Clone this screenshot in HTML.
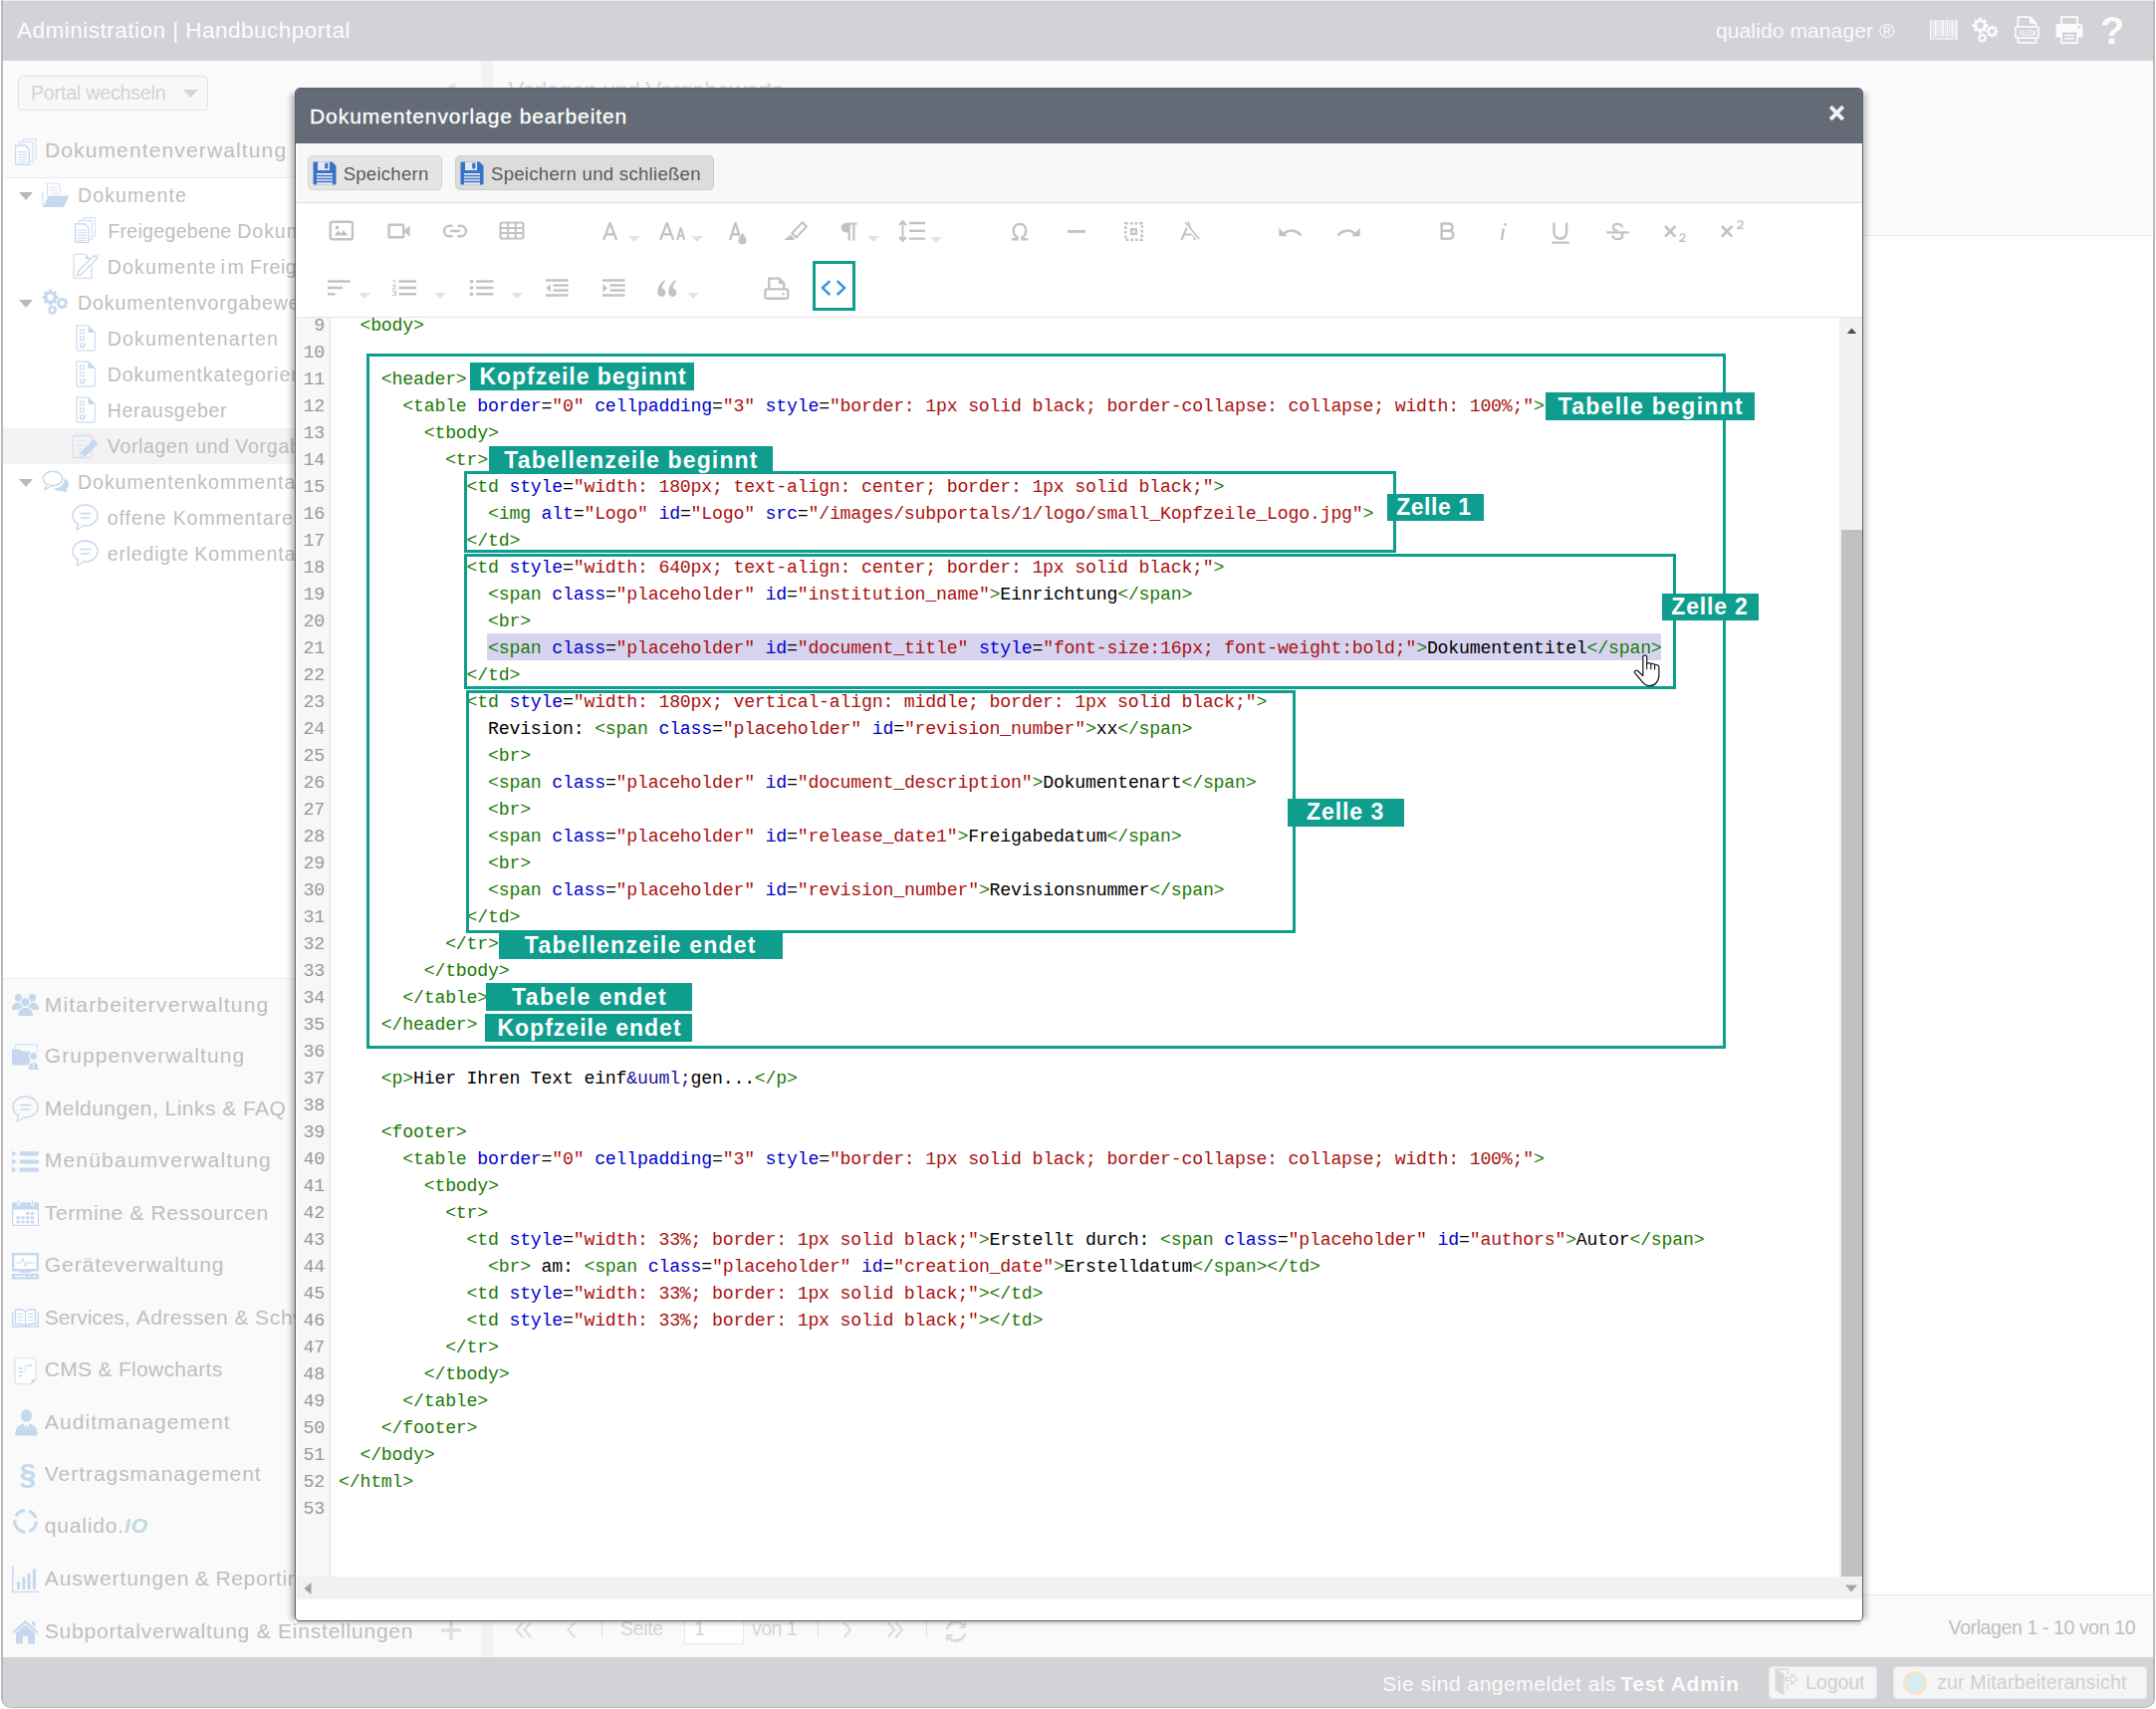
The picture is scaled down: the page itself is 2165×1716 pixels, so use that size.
<!DOCTYPE html>
<html lang="de"><head><meta charset="utf-8"><title>Dokumentenvorlage bearbeiten</title>
<style>
html,body{margin:0;padding:0;}
body{width:2165px;height:1716px;position:relative;overflow:hidden;background:#fff;font-family:'Liberation Sans', sans-serif;}
div,svg{box-sizing:border-box;}
.cm{font-family:'Liberation Mono', monospace;white-space:pre;position:absolute;}
.t{color:#1c7a08} .a{color:#0000cc} .s{color:#aa1111} .e{color:#221199} .k{color:#000}
</style></head><body>
<div style="position:absolute;left:1px;top:0px;width:2163px;height:1715px;border:2px solid #b9b9bb;border-top:1px solid #ececee;border-radius:0 0 10px 10px;background:#fff;overflow:hidden"></div>
<div style="position:absolute;left:3px;top:1px;width:2159px;height:59.5px;background:#d2d3d7"></div>
<div style="position:absolute;left:3px;top:60.5px;width:480px;height:1604px;background:#fff"></div>
<div style="position:absolute;left:3px;top:60.5px;width:480px;height:118px;background:#fafafa"></div>
<div style="position:absolute;left:3px;top:178px;width:480px;height:1px;background:#ececec"></div>
<div style="position:absolute;left:3px;top:430px;width:480px;height:36px;background:#f3f3f3"></div>
<div style="position:absolute;left:3px;top:982px;width:480px;height:683px;background:#fafafa"></div>
<div style="position:absolute;left:3px;top:982px;width:480px;height:1px;background:#ededed"></div>
<div style="position:absolute;left:483px;top:60.5px;width:12px;height:1604px;background:#f3f3f3"></div>
<div style="position:absolute;left:495px;top:60.5px;width:1667px;height:176px;background:#fafafa"></div>
<div style="position:absolute;left:495px;top:236px;width:1667px;height:1px;background:#ececec"></div>
<div style="position:absolute;left:495px;top:237px;width:1667px;height:1365px;background:#fff"></div>
<div style="position:absolute;left:495px;top:1601px;width:1667px;height:1px;background:#e6e6e6"></div>
<div style="position:absolute;left:495px;top:1602px;width:1667px;height:62.5px;background:#fafafa"></div>
<div style="position:absolute;left:3px;top:1664px;width:2159px;height:50px;background:#d2d3d7;border-radius:0 0 8px 8px"></div>
<div style="position:absolute;left:18px;top:76px;width:191px;height:35px;border:1px solid #e2e2e2;border-radius:5px;background:#f8f8f8"></div>
<svg style="position:absolute;left:184px;top:90px;" width="15" height="8" viewBox="0 0 15 8"><path d="M0 0h15L7.5 8z" fill="#d4d4d4"/></svg>
<svg style="position:absolute;left:18.5px;top:193px;" width="14" height="8" viewBox="0 0 14 8"><path d="M0 0h14L7 8z" fill="#b9b9b9"/></svg>
<svg style="position:absolute;left:18.5px;top:301px;" width="14" height="8" viewBox="0 0 14 8"><path d="M0 0h14L7 8z" fill="#b9b9b9"/></svg>
<svg style="position:absolute;left:18.5px;top:481px;" width="14" height="8" viewBox="0 0 14 8"><path d="M0 0h14L7 8z" fill="#b9b9b9"/></svg>
<div style="position:absolute;left:687px;top:1615px;width:60px;height:36px;border:1px solid #e8e8e8;background:#fff"></div>
<div style="position:absolute;left:604px;top:1622px;width:1px;height:22px;background:#dedede"></div>
<div style="position:absolute;left:821px;top:1622px;width:1px;height:22px;background:#dedede"></div>
<div style="position:absolute;left:930px;top:1622px;width:1px;height:22px;background:#dedede"></div>
<div style="position:absolute;left:1776px;top:1672.5px;width:108.5px;height:33.5px;background:#f5f5f5;border:1px solid #e6e6e6;border-radius:4px"></div>
<div style="position:absolute;left:1901px;top:1672.5px;width:255px;height:33.5px;background:#f5f5f5;border:1px solid #e6e6e6;border-radius:4px"></div>
<svg style="position:absolute;left:15px;top:138.5px;" width="22.0" height="27.0" viewBox="0 0 22 27"><path d="M8.500 3.500V0.700H21.300V19.800H18.800" fill="none" stroke="#d6e3f3" stroke-width="1.200"/><path d="M4.500 6.500V3.700H17.800V23.200H15" fill="none" stroke="#d6e3f3" stroke-width="1.200"/><path d="M0.700 7.200H10.500L14.300 11V26.300H0.700z" fill="#fff" stroke="#c5d8ee" stroke-width="1.300"/><path d="M3.200 13.500H12M3.200 16.200H12M3.200 18.900H12M3.200 21.600H12M3.200 24.100H12" stroke="#c5d8ee" stroke-width="1"/></svg>
<svg style="position:absolute;left:75px;top:218px;" width="21.34" height="26.189999999999998" viewBox="0 0 22 27"><path d="M8.500 3.500V0.700H21.300V19.800H18.800" fill="none" stroke="#d6e3f3" stroke-width="1.200"/><path d="M4.500 6.500V3.700H17.800V23.200H15" fill="none" stroke="#d6e3f3" stroke-width="1.200"/><path d="M0.700 7.200H10.500L14.300 11V26.300H0.700z" fill="#fff" stroke="#c5d8ee" stroke-width="1.300"/><path d="M3.200 13.500H12M3.200 16.200H12M3.200 18.900H12M3.200 21.600H12M3.200 24.100H12" stroke="#c5d8ee" stroke-width="1"/></svg>
<svg style="position:absolute;left:41.5px;top:182.5px;" width="28" height="26" viewBox="0 0 28 26"><path d="M5.500 14V1H15L18.500 4.500V12" fill="#fff" stroke="#d6e3f3" stroke-width="1.200"/><path d="M8 5H15M8 8H16M8 11H16" stroke="#d6e3f3" stroke-width="1"/><path d="M1 9V24.500" stroke="#d6e3f3" stroke-width="1.400"/><path d="M1.200 25L6.500 13.500H27.300L22 25z" fill="#c5d8ee"/></svg>
<svg style="position:absolute;left:72.5px;top:254px;" width="27" height="27" viewBox="0 0 27 27"><path d="M14 1.200H1.200V25.500H19V13" fill="none" stroke="#d6e3f3" stroke-width="1.500" stroke-linejoin="round"/><path d="M13 1.200v5h5z" fill="#c5d8ee"/><path d="M5.500 18.500L21.500 2.500 24.500 5.500 8.500 21.500 4.500 22.500z" fill="#fff" stroke="#c5d8ee" stroke-width="1.300"/><circle cx="24.500" cy="3" r="1.500" fill="none" stroke="#d6e3f3" stroke-width="1"/></svg>
<svg style="position:absolute;left:41.5px;top:289.5px;" width="28" height="27" viewBox="0 0 28 27"><g transform="translate(8.500,8.500) scale(0.950)"><circle cx="0" cy="0" r="5" fill="none" stroke="#c5d8ee" stroke-width="3.400"/><rect x="-1.500" y="-8.300" width="3" height="3" fill="#c5d8ee" transform="rotate(0)"/><rect x="-1.500" y="-8.300" width="3" height="3" fill="#c5d8ee" transform="rotate(45)"/><rect x="-1.500" y="-8.300" width="3" height="3" fill="#c5d8ee" transform="rotate(90)"/><rect x="-1.500" y="-8.300" width="3" height="3" fill="#c5d8ee" transform="rotate(135)"/><rect x="-1.500" y="-8.300" width="3" height="3" fill="#c5d8ee" transform="rotate(180)"/><rect x="-1.500" y="-8.300" width="3" height="3" fill="#c5d8ee" transform="rotate(225)"/><rect x="-1.500" y="-8.300" width="3" height="3" fill="#c5d8ee" transform="rotate(270)"/><rect x="-1.500" y="-8.300" width="3" height="3" fill="#c5d8ee" transform="rotate(315)"/></g><g transform="translate(20.500,14.500) scale(0.720)"><circle cx="0" cy="0" r="5" fill="none" stroke="#c5d8ee" stroke-width="3.400"/><rect x="-1.500" y="-8.300" width="3" height="3" fill="#c5d8ee" transform="rotate(0)"/><rect x="-1.500" y="-8.300" width="3" height="3" fill="#c5d8ee" transform="rotate(45)"/><rect x="-1.500" y="-8.300" width="3" height="3" fill="#c5d8ee" transform="rotate(90)"/><rect x="-1.500" y="-8.300" width="3" height="3" fill="#c5d8ee" transform="rotate(135)"/><rect x="-1.500" y="-8.300" width="3" height="3" fill="#c5d8ee" transform="rotate(180)"/><rect x="-1.500" y="-8.300" width="3" height="3" fill="#c5d8ee" transform="rotate(225)"/><rect x="-1.500" y="-8.300" width="3" height="3" fill="#c5d8ee" transform="rotate(270)"/><rect x="-1.500" y="-8.300" width="3" height="3" fill="#c5d8ee" transform="rotate(315)"/></g><g transform="translate(10.500,21.200) scale(0.580)"><circle cx="0" cy="0" r="5" fill="none" stroke="#c5d8ee" stroke-width="3.400"/><rect x="-1.500" y="-8.300" width="3" height="3" fill="#c5d8ee" transform="rotate(0)"/><rect x="-1.500" y="-8.300" width="3" height="3" fill="#c5d8ee" transform="rotate(45)"/><rect x="-1.500" y="-8.300" width="3" height="3" fill="#c5d8ee" transform="rotate(90)"/><rect x="-1.500" y="-8.300" width="3" height="3" fill="#c5d8ee" transform="rotate(135)"/><rect x="-1.500" y="-8.300" width="3" height="3" fill="#c5d8ee" transform="rotate(180)"/><rect x="-1.500" y="-8.300" width="3" height="3" fill="#c5d8ee" transform="rotate(225)"/><rect x="-1.500" y="-8.300" width="3" height="3" fill="#c5d8ee" transform="rotate(270)"/><rect x="-1.500" y="-8.300" width="3" height="3" fill="#c5d8ee" transform="rotate(315)"/></g></svg>
<svg style="position:absolute;left:75.5px;top:325.5px;" width="21" height="27" viewBox="0 0 21 27"><path d="M1 1H12.500L19.500 8V24.500Q19.500 26 18 26H2.500Q1 26 1 24.500z" fill="none" stroke="#d6e3f3" stroke-width="1.500"/><path d="M12.500 1V8H19.500z" fill="#c5d8ee"/><rect x="4.500" y="5" width="3.800" height="3.800" fill="none" stroke="#c5d8ee" stroke-width="1"/><rect x="4.500" y="12" width="3.800" height="3.800" fill="none" stroke="#c5d8ee" stroke-width="1"/><rect x="4.500" y="19" width="3.800" height="3.800" fill="none" stroke="#c5d8ee" stroke-width="1"/><path d="M5.500 21l1.500 1.500 4-3.500" fill="none" stroke="#c5d8ee" stroke-width="1"/></svg>
<svg style="position:absolute;left:75.5px;top:361.5px;" width="21" height="27" viewBox="0 0 21 27"><path d="M1 1H12.500L19.500 8V24.500Q19.500 26 18 26H2.500Q1 26 1 24.500z" fill="none" stroke="#d6e3f3" stroke-width="1.500"/><path d="M12.500 1V8H19.500z" fill="#c5d8ee"/><rect x="4.500" y="5" width="3.800" height="3.800" fill="none" stroke="#c5d8ee" stroke-width="1"/><rect x="4.500" y="12" width="3.800" height="3.800" fill="none" stroke="#c5d8ee" stroke-width="1"/><rect x="4.500" y="19" width="3.800" height="3.800" fill="none" stroke="#c5d8ee" stroke-width="1"/><path d="M5.500 21l1.500 1.500 4-3.500" fill="none" stroke="#c5d8ee" stroke-width="1"/></svg>
<svg style="position:absolute;left:75.5px;top:397.5px;" width="21" height="27" viewBox="0 0 21 27"><path d="M1 1H12.500L19.500 8V24.500Q19.500 26 18 26H2.500Q1 26 1 24.500z" fill="none" stroke="#d6e3f3" stroke-width="1.500"/><path d="M12.500 1V8H19.500z" fill="#c5d8ee"/><rect x="4.500" y="5" width="3.800" height="3.800" fill="none" stroke="#c5d8ee" stroke-width="1"/><rect x="4.500" y="12" width="3.800" height="3.800" fill="none" stroke="#c5d8ee" stroke-width="1"/><rect x="4.500" y="19" width="3.800" height="3.800" fill="none" stroke="#c5d8ee" stroke-width="1"/><path d="M5.500 21l1.500 1.500 4-3.500" fill="none" stroke="#c5d8ee" stroke-width="1"/></svg>
<svg style="position:absolute;left:72px;top:433px;" width="28" height="28" viewBox="0 0 28 28"><path d="M1 4.500H20V13M20 20V26.500H1V4.500" fill="none" stroke="#d6e3f3" stroke-width="1.400"/><path d="M5 1.500V6M9 1.500V6M13 1.500V6M17 1.500V6" stroke="#d6e3f3" stroke-width="1"/><path d="M4.500 10H16M4.500 14H14M4.500 18H11" stroke="#d6e3f3" stroke-width="1"/><path d="M8.500 21.500L22 8l4.500 4.500L13 26 7.500 27z" fill="#c5d8ee"/><path d="M9.500 22.500l2.500 2.500-3 .700z" fill="#fff"/></svg>
<svg style="position:absolute;left:42px;top:471.5px;" width="28" height="24" viewBox="0 0 28 24"><ellipse cx="11" cy="8.500" rx="9.800" ry="7.300" fill="#fff" stroke="#c5d8ee" stroke-width="1.500"/><path d="M5 14.500L3 19.500 10 15.800" fill="#fff" stroke="#c5d8ee" stroke-width="1.300"/><path d="M22.500 8.500c3 1.300 4.500 3.500 4.500 6 0 2-1 3.800-2.700 5l1.700 3.500-5-2c-3.500.5-7-.3-9-2.500 6 0 11-4 10.500-10z" fill="#c5d8ee"/></svg>
<svg style="position:absolute;left:72px;top:505.5px;" width="27" height="27" viewBox="0 0 27 27"><ellipse cx="13.500" cy="11.500" rx="12.500" ry="10.500" fill="none" stroke="#c5d8ee" stroke-width="1.400"/><path d="M6.500 20L5 26 12.500 21.800" fill="#fff" stroke="#c5d8ee" stroke-width="1.300" stroke-linejoin="round"/><path d="M8 9.500H19.500M9 14H18" stroke="#c5d8ee" stroke-width="1.500"/></svg>
<svg style="position:absolute;left:72px;top:541.5px;" width="27" height="27" viewBox="0 0 27 27"><ellipse cx="13.500" cy="11.500" rx="12.500" ry="10.500" fill="none" stroke="#c5d8ee" stroke-width="1.400"/><path d="M6.500 20L5 26 12.500 21.800" fill="#fff" stroke="#c5d8ee" stroke-width="1.300" stroke-linejoin="round"/><path d="M8 9.500H19.500M9 14H18" stroke="#c5d8ee" stroke-width="1.500"/></svg>
<svg style="position:absolute;left:12px;top:997px;" width="27" height="24" viewBox="0 0 27 24"><circle cx="6.500" cy="4.800" r="3.700" fill="#c5d8ee"/><circle cx="20.500" cy="4.800" r="3.700" fill="#c5d8ee"/><path d="M0 17C0 11.500 2.500 9.500 6.500 9.500S13 11.500 13 17z" fill="#c5d8ee"/><path d="M14 17C14 11.500 16.500 9.500 20.500 9.500S27 11.500 27 17z" fill="#c5d8ee"/><circle cx="13.500" cy="9.300" r="4.600" fill="#c5d8ee" stroke="#fafafa" stroke-width="1.200"/><path d="M5.500 23.500C5.500 17 8.500 14.500 13.500 14.500S21.500 17 21.500 23.500z" fill="#c5d8ee" stroke="#fafafa" stroke-width="1.200"/></svg>
<svg style="position:absolute;left:12px;top:1047.5px;" width="27" height="27" viewBox="0 0 27 27"><path d="M3.500 5V0.800H25.500V9" fill="none" stroke="#d6e3f3" stroke-width="1.200"/><path d="M0 5.500H8L10 7.500H18V21.500H0z" fill="#c5d8ee"/><circle cx="21.500" cy="12.500" r="4" fill="#c5d8ee" stroke="#fafafa" stroke-width="1.200"/><path d="M16 26.500C16 20.500 18 18.500 21.500 18.500S27 20.500 27 26.500z" fill="#c5d8ee" stroke="#fafafa" stroke-width="1.200"/><path d="M21.500 19.500V25" stroke="#fafafa" stroke-width="1"/></svg>
<svg style="position:absolute;left:12px;top:1099.5px;" width="27" height="27" viewBox="0 0 27 27"><ellipse cx="13.500" cy="11.500" rx="12.500" ry="10.500" fill="none" stroke="#c5d8ee" stroke-width="1.400"/><path d="M6.500 20L5 26 12.500 21.800" fill="#fff" stroke="#c5d8ee" stroke-width="1.300" stroke-linejoin="round"/><path d="M8 9.500H19.500M9 14H18" stroke="#c5d8ee" stroke-width="1.500"/></svg>
<svg style="position:absolute;left:12px;top:1155px;" width="27" height="23" viewBox="0 0 27 23"><path d="M0 0.500L5 3.500 0 6.500zM0 8.500L5 11.500 0 14.500zM0 16.500L5 19.500 0 22.500z" fill="#c5d8ee"/><rect x="7.500" y="1.200" width="19.500" height="4.200" rx="1.300" fill="#c5d8ee"/><rect x="7.500" y="9.400" width="19.500" height="4.200" rx="1.300" fill="#c5d8ee"/><rect x="7.500" y="17.600" width="19.500" height="4.200" rx="1.300" fill="#c5d8ee"/></svg>
<svg style="position:absolute;left:12px;top:1205px;" width="27" height="26" viewBox="0 0 27 26"><rect x="0.600" y="3" width="25.800" height="22.400" fill="#fff" stroke="#c5d8ee" stroke-width="1.200"/><rect x="0.600" y="3" width="25.800" height="6.500" fill="#c5d8ee"/><path d="M6.500 0.500V6M20.500 0.500V6" stroke="#fff" stroke-width="3"/><path d="M6.500 0.500V5.500M20.500 0.500V5.500" stroke="#c5d8ee" stroke-width="1.300"/><rect x="14.1" y="12.0" width="3.300" height="2.800" fill="#c5d8ee"/><rect x="18.9" y="12.0" width="3.300" height="2.800" fill="#c5d8ee"/><rect x="4.5" y="16.3" width="3.300" height="2.800" fill="#c5d8ee"/><rect x="9.3" y="16.3" width="3.300" height="2.800" fill="#c5d8ee"/><rect x="14.1" y="16.3" width="3.300" height="2.800" fill="#c5d8ee"/><rect x="18.9" y="16.3" width="3.300" height="2.800" fill="#c5d8ee"/><rect x="4.5" y="20.6" width="3.300" height="2.800" fill="#c5d8ee"/><rect x="9.3" y="20.6" width="3.300" height="2.800" fill="#c5d8ee"/><rect x="14.1" y="20.6" width="3.300" height="2.800" fill="#c5d8ee"/><rect x="18.9" y="20.6" width="3.300" height="2.800" fill="#c5d8ee"/></svg>
<svg style="position:absolute;left:12px;top:1258px;" width="27" height="27" viewBox="0 0 27 27"><rect x="1.200" y="1.200" width="24.600" height="16" fill="#fff" stroke="#c5d8ee" stroke-width="2.400"/><path d="M4 10H9L11 5.500 13.500 14 15.500 8.500 16.500 10H23" fill="none" stroke="#c5d8ee" stroke-width="1"/><rect x="8" y="18" width="11" height="2" fill="#c5d8ee"/><rect x="0" y="21" width="27" height="5.500" fill="#c5d8ee"/><path d="M3 23.700H14M17 23.700H19M21 23.700H24" stroke="#fff" stroke-width="1.200"/></svg>
<svg style="position:absolute;left:12px;top:1314px;" width="27" height="19" viewBox="0 0 27 19"><path d="M0.700 3V18H26.300V3" fill="none" stroke="#c5d8ee" stroke-width="1.300"/><path d="M3.500 1C7 .500 11 .800 13.500 2.800 16 .800 20 .500 23.500 1V15.500C20 15 16 15.300 13.500 17 11 15.300 7 15 3.500 15.500z" fill="#fff" stroke="#c5d8ee" stroke-width="1.300"/><path d="M13.500 2.800V17" stroke="#c5d8ee" stroke-width="1.300"/><path d="M6 5.500H11M6 8.500H11M6 11.500H11M16 5.500H21M16 8.500H21M16 11.500H21" stroke="#c5d8ee" stroke-width="1"/></svg>
<svg style="position:absolute;left:14px;top:1362.5px;" width="23" height="28" viewBox="0 0 23 28"><path d="M1 2.500Q1 1 2.500 1H20.500Q22 1 22 2.500V22L17.500 26.500H2.500Q1 26.500 1 25z" fill="#fff" stroke="#d6e3f3" stroke-width="1.200"/><path d="M22 22H17.500V26.500z" fill="#c5d8ee"/><path d="M4.500 11H9M4.500 14.500H9M4.500 18.500H9M14 8H18.500" stroke="#c5d8ee" stroke-width="1.500"/><path d="M9 14.500H11.500V8H14" fill="none" stroke="#d6e3f3" stroke-width="1"/></svg>
<svg style="position:absolute;left:14.5px;top:1414.5px;" width="23" height="27" viewBox="0 0 23 27"><ellipse cx="11.500" cy="6.500" rx="5.500" ry="6.200" fill="#c5d8ee"/><path d="M0.300 26.500C0.300 18.500 3 16 8.500 14.500L11.500 22 14.500 14.500C20 16 22.700 18.500 22.700 26.500z" fill="#c5d8ee"/><path d="M11.500 15.500l1.200 1.500-1.200 7-1.200-7z" fill="#c5d8ee"/></svg>
<svg style="position:absolute;left:12px;top:1514px;" width="27" height="27" viewBox="0 0 27 27"><circle cx="13.500" cy="13.500" r="10.800" fill="none" stroke="#c5d8ee" stroke-width="3.200" stroke-dasharray="13 4 18 4 11 4 10 3.860"/></svg>
<svg style="position:absolute;left:12px;top:1572px;" width="27" height="27" viewBox="0 0 27 27"><path d="M0.700 0V26.300H27" fill="none" stroke="#c5d8ee" stroke-width="1.300"/><path d="M0.700 4H2.500M0.700 9H2.500M0.700 14H2.500M0.700 19H2.500" stroke="#c5d8ee" stroke-width="1"/><rect x="5" y="16" width="3" height="8" rx="1" fill="#c5d8ee"/><rect x="10.300" y="11.500" width="3" height="12.500" rx="1" fill="#c5d8ee"/><rect x="15.600" y="7.500" width="3" height="16.500" rx="1" fill="#c5d8ee"/><rect x="20.900" y="3.500" width="3" height="20.500" rx="1" fill="#c5d8ee"/></svg>
<svg style="position:absolute;left:12px;top:1626px;" width="27" height="25" viewBox="0 0 27 25"><path d="M13.500 1L26.500 12.500 25 14 13.500 4 2 14 .500 12.500z" fill="#c5d8ee"/><path d="M20 2.500h3.500v5.500L20 5z" fill="#c5d8ee"/><path d="M4 13.500L13.500 5.500 23 13.500V24.500H16V17H11V24.500H4z" fill="#c5d8ee"/></svg>
<svg style="position:absolute;left:1937.5px;top:19.8px;" width="28" height="20.5" viewBox="0 0 28 20.5"><rect x="0" y="0" width="1.5" height="20.5" fill="#fbfbfc"/><rect x="2.6" y="0" width="1" height="20.5" fill="#fbfbfc"/><rect x="4.6" y="0" width="2" height="16.5" fill="#fbfbfc"/><rect x="7.6" y="0" width="1" height="16.5" fill="#fbfbfc"/><rect x="9.6" y="0" width="1" height="16.5" fill="#fbfbfc"/><rect x="11.6" y="0" width="2.2" height="16.5" fill="#fbfbfc"/><rect x="14.8" y="0" width="1" height="16.5" fill="#fbfbfc"/><rect x="16.8" y="0" width="1.6" height="16.5" fill="#fbfbfc"/><rect x="19.4" y="0" width="1" height="16.5" fill="#fbfbfc"/><rect x="21.4" y="0" width="2" height="16.5" fill="#fbfbfc"/><rect x="24.4" y="0" width="1" height="20.5" fill="#fbfbfc"/><rect x="26" y="0" width="1.5" height="20.5" fill="#fbfbfc"/><rect x="3.500" y="17.500" width="20.500" height="2.500" fill="#fbfbfc" opacity="0.600"/></svg>
<svg style="position:absolute;left:1979.5px;top:16.5px;" width="28" height="27" viewBox="0 0 28 27"><g transform="translate(8.500,8.500) scale(0.950)"><circle cx="0" cy="0" r="5" fill="none" stroke="#fbfbfc" stroke-width="3.400"/><rect x="-1.500" y="-8.300" width="3" height="3" fill="#fbfbfc" transform="rotate(0)"/><rect x="-1.500" y="-8.300" width="3" height="3" fill="#fbfbfc" transform="rotate(45)"/><rect x="-1.500" y="-8.300" width="3" height="3" fill="#fbfbfc" transform="rotate(90)"/><rect x="-1.500" y="-8.300" width="3" height="3" fill="#fbfbfc" transform="rotate(135)"/><rect x="-1.500" y="-8.300" width="3" height="3" fill="#fbfbfc" transform="rotate(180)"/><rect x="-1.500" y="-8.300" width="3" height="3" fill="#fbfbfc" transform="rotate(225)"/><rect x="-1.500" y="-8.300" width="3" height="3" fill="#fbfbfc" transform="rotate(270)"/><rect x="-1.500" y="-8.300" width="3" height="3" fill="#fbfbfc" transform="rotate(315)"/></g><g transform="translate(20.500,14.500) scale(0.720)"><circle cx="0" cy="0" r="5" fill="none" stroke="#fbfbfc" stroke-width="3.400"/><rect x="-1.500" y="-8.300" width="3" height="3" fill="#fbfbfc" transform="rotate(0)"/><rect x="-1.500" y="-8.300" width="3" height="3" fill="#fbfbfc" transform="rotate(45)"/><rect x="-1.500" y="-8.300" width="3" height="3" fill="#fbfbfc" transform="rotate(90)"/><rect x="-1.500" y="-8.300" width="3" height="3" fill="#fbfbfc" transform="rotate(135)"/><rect x="-1.500" y="-8.300" width="3" height="3" fill="#fbfbfc" transform="rotate(180)"/><rect x="-1.500" y="-8.300" width="3" height="3" fill="#fbfbfc" transform="rotate(225)"/><rect x="-1.500" y="-8.300" width="3" height="3" fill="#fbfbfc" transform="rotate(270)"/><rect x="-1.500" y="-8.300" width="3" height="3" fill="#fbfbfc" transform="rotate(315)"/></g><g transform="translate(10.500,21.200) scale(0.580)"><circle cx="0" cy="0" r="5" fill="none" stroke="#fbfbfc" stroke-width="3.400"/><rect x="-1.500" y="-8.300" width="3" height="3" fill="#fbfbfc" transform="rotate(0)"/><rect x="-1.500" y="-8.300" width="3" height="3" fill="#fbfbfc" transform="rotate(45)"/><rect x="-1.500" y="-8.300" width="3" height="3" fill="#fbfbfc" transform="rotate(90)"/><rect x="-1.500" y="-8.300" width="3" height="3" fill="#fbfbfc" transform="rotate(135)"/><rect x="-1.500" y="-8.300" width="3" height="3" fill="#fbfbfc" transform="rotate(180)"/><rect x="-1.500" y="-8.300" width="3" height="3" fill="#fbfbfc" transform="rotate(225)"/><rect x="-1.500" y="-8.300" width="3" height="3" fill="#fbfbfc" transform="rotate(270)"/><rect x="-1.500" y="-8.300" width="3" height="3" fill="#fbfbfc" transform="rotate(315)"/></g></svg>
<svg style="position:absolute;left:2023px;top:16.2px;" width="25" height="28" viewBox="0 0 25 28"><path d="M3.500 10V1.200H15.500L21.500 7.200V10M21.500 23V26.800H3.500V23" fill="none" stroke="#fbfbfc" stroke-width="1.800"/><path d="M15 1.200V7.700H21.500z" fill="#fbfbfc"/><rect x="0.900" y="10.900" width="23.200" height="11.200" rx="1.500" fill="none" stroke="#fbfbfc" stroke-width="1.800"/></svg>
<svg style="position:absolute;left:2064px;top:16.2px;" width="28" height="28" viewBox="0 0 28 28"><path d="M6 9V1.200H22V9" fill="none" stroke="#fbfbfc" stroke-width="1.800"/><path d="M2.500 8H25.500Q27.500 8 27.500 10V21.500H0.500V10Q0.500 8 2.500 8z" fill="#fbfbfc"/><circle cx="24" cy="11.300" r="1.300" fill="#d2d3d7"/><rect x="6" y="15.500" width="16" height="11.600" fill="#d2d3d7" stroke="#fbfbfc" stroke-width="1.800"/><path d="M9 19.500H19M9 22.800H19" stroke="#fbfbfc" stroke-width="1.600"/></svg>
<svg style="position:absolute;left:1782px;top:1674.5px;" width="24" height="28" viewBox="0 0 24 28"><path d="M0.500 1H13V6M13 16V22" fill="none" stroke="#d9d9db" stroke-width="1.400"/><path d="M0.500 1L9.500 5.500V27L0.500 22z" fill="#d9d9db"/><path d="M11 9.500H17V6L23 11 17 16V12.500H11z" fill="#f5f5f5" stroke="#d9d9db" stroke-width="1.400" stroke-linejoin="round"/></svg>
<svg style="position:absolute;left:1910px;top:1677px;" width="26" height="26" viewBox="0 0 26 26"><circle cx="13" cy="13" r="10.800" fill="#d6ecee" stroke="#fae2c6" stroke-width="2.600"/></svg>
<svg style="position:absolute;left:517px;top:1628px;" width="18" height="17" viewBox="0 0 18 17"><path d="M8 1L1.500 8.500 8 16" fill="none" stroke="#dcdcde" stroke-width="2"/><path d="M8 1L1.500 8.500 8 16" fill="none" stroke="#dcdcde" stroke-width="2" transform="translate(8,0)"/></svg>
<svg style="position:absolute;left:569px;top:1628px;" width="10" height="17" viewBox="0 0 10 17"><path d="M8 1L1.500 8.500 8 16" fill="none" stroke="#dcdcde" stroke-width="2"/></svg>
<svg style="position:absolute;left:846px;top:1628px;" width="10" height="17" viewBox="0 0 10 17"><path d="M1.500 1L8 8.500 1.500 16" fill="none" stroke="#dcdcde" stroke-width="2"/></svg>
<svg style="position:absolute;left:890px;top:1628px;" width="18" height="17" viewBox="0 0 18 17"><path d="M1.500 1L8 8.500 1.500 16" fill="none" stroke="#dcdcde" stroke-width="2"/><path d="M1.500 1L8 8.500 1.500 16" fill="none" stroke="#dcdcde" stroke-width="2" transform="translate(8,0)"/></svg>
<svg style="position:absolute;left:948px;top:1626px;" width="24" height="24" viewBox="0 0 24 24"><path d="M3 10A9.500 9.500 0 0 1 20 6.500M21 14A9.500 9.500 0 0 1 4 17.500" fill="none" stroke="#dcdcde" stroke-width="3"/><path d="M22 1.500V9H14.500zM2 22.500V15H9.500z" fill="#dcdcde"/></svg>
<svg style="position:absolute;left:442px;top:1625.5px;" width="22" height="22" viewBox="0 0 22 22"><path d="M11 1V21M1 11H21" stroke="#dedee0" stroke-width="3.600"/></svg>
<svg style="position:absolute;left:448px;top:82px;" width="10" height="12" viewBox="0 0 10 12"><path d="M9.500 0.500V11.500L0.500 6z" fill="#e4e4e4"/></svg>
<div style="position:absolute;left:17.00px;top:19.95px;font-size:22.5px;line-height:22.5px;height:29.2px;color:#fdfdfd;font-weight:400;font-style:normal;letter-spacing:0.491px;white-space:pre;">Administration | Handbuchportal</div>
<div style="position:absolute;left:1723.00px;top:20.22px;font-size:21px;line-height:21px;height:27.3px;color:#fafafa;font-weight:400;font-style:normal;letter-spacing:0.108px;white-space:pre;">qualido manager ®</div>
<div style="position:absolute;left:31.00px;top:84.49px;font-size:19.5px;line-height:19.5px;height:25.4px;color:#d2d2d4;font-weight:400;font-style:normal;letter-spacing:-0.154px;white-space:pre;">Portal wechseln</div>
<div style="position:absolute;left:44.90px;top:140.22px;font-size:21px;line-height:21px;height:27.3px;color:#bebec2;font-weight:400;font-style:normal;letter-spacing:1.136px;white-space:pre;">Dokumentenverwaltung</div>
<div style="position:absolute;left:44.80px;top:998.22px;font-size:21px;line-height:21px;height:27.3px;color:#bebec2;font-weight:400;font-style:normal;letter-spacing:1.182px;white-space:pre;">Mitarbeiterverwaltung</div>
<div style="position:absolute;left:44.80px;top:1049.22px;font-size:21px;line-height:21px;height:27.3px;color:#bebec2;font-weight:400;font-style:normal;letter-spacing:1.064px;white-space:pre;">Gruppenverwaltung</div>
<div style="position:absolute;left:44.80px;top:1102.22px;font-size:21px;line-height:21px;height:27.3px;color:#bebec2;font-weight:400;font-style:normal;letter-spacing:0.467px;white-space:pre;">Meldungen, Links &amp; FAQ</div>
<div style="position:absolute;left:44.80px;top:1154.22px;font-size:21px;line-height:21px;height:27.3px;color:#bebec2;font-weight:400;font-style:normal;letter-spacing:1.199px;white-space:pre;">Menübaumverwaltung</div>
<div style="position:absolute;left:44.80px;top:1207.22px;font-size:21px;line-height:21px;height:27.3px;color:#bebec2;font-weight:400;font-style:normal;letter-spacing:0.630px;white-space:pre;">Termine &amp; Ressourcen</div>
<div style="position:absolute;left:44.80px;top:1259.22px;font-size:21px;line-height:21px;height:27.3px;color:#bebec2;font-weight:400;font-style:normal;letter-spacing:0.929px;white-space:pre;">Geräteverwaltung</div>
<div style="position:absolute;left:44.80px;top:1312.22px;font-size:21px;line-height:21px;height:27.3px;color:#bebec2;font-weight:400;font-style:normal;letter-spacing:-0.082px;white-space:pre;">Services,</div>
<div style="position:absolute;left:136.70px;top:1312.22px;font-size:21px;line-height:21px;height:27.3px;color:#bebec2;font-weight:400;font-style:normal;letter-spacing:0.469px;white-space:pre;">Adressen</div>
<div style="position:absolute;left:235.60px;top:1312.22px;font-size:21px;line-height:21px;height:27.3px;color:#bebec2;font-weight:400;font-style:normal;letter-spacing:0.384px;white-space:pre;">&amp;</div>
<div style="position:absolute;left:256.10px;top:1312.22px;font-size:21px;line-height:21px;height:27.3px;color:#bebec2;font-weight:400;font-style:normal;letter-spacing:0.655px;white-space:pre;">Schwarzes Brett</div>
<div style="position:absolute;left:44.80px;top:1364.22px;font-size:21px;line-height:21px;height:27.3px;color:#bebec2;font-weight:400;font-style:normal;letter-spacing:0.302px;white-space:pre;">CMS &amp; Flowcharts</div>
<div style="position:absolute;left:44.80px;top:1417.22px;font-size:21px;line-height:21px;height:27.3px;color:#bebec2;font-weight:400;font-style:normal;letter-spacing:1.089px;white-space:pre;">Auditmanagement</div>
<div style="position:absolute;left:44.80px;top:1469.22px;font-size:21px;line-height:21px;height:27.3px;color:#bebec2;font-weight:400;font-style:normal;letter-spacing:0.947px;white-space:pre;">Vertragsmanagement</div>
<div style="position:absolute;left:44.80px;top:1521.22px;font-size:21px;line-height:21px;height:27.3px;color:#bebec2;font-weight:400;font-style:normal;letter-spacing:0.820px;white-space:pre;">qualido.</div>
<div style="position:absolute;left:44.80px;top:1574.22px;font-size:21px;line-height:21px;height:27.3px;color:#bebec2;font-weight:400;font-style:normal;letter-spacing:0.939px;white-space:pre;">Auswertungen</div>
<div style="position:absolute;left:195.70px;top:1574.22px;font-size:21px;line-height:21px;height:27.3px;color:#bebec2;font-weight:400;font-style:normal;letter-spacing:1.384px;white-space:pre;">&amp;</div>
<div style="position:absolute;left:216.40px;top:1574.22px;font-size:21px;line-height:21px;height:27.3px;color:#bebec2;font-weight:400;font-style:normal;letter-spacing:0.683px;white-space:pre;">Reporting</div>
<div style="position:absolute;left:44.80px;top:1627.22px;font-size:21px;line-height:21px;height:27.3px;color:#bebec2;font-weight:400;font-style:normal;letter-spacing:0.779px;white-space:pre;">Subportalverwaltung &amp; Einstellungen</div>
<div style="position:absolute;left:125.00px;top:1521.22px;font-size:21px;line-height:21px;height:27.3px;color:#bfdcdc;font-weight:700;font-style:italic;letter-spacing:1.028px;white-space:pre;">IO</div>
<div style="position:absolute;left:78.00px;top:187.49px;font-size:19.5px;line-height:19.5px;height:25.4px;color:#bebec2;font-weight:400;font-style:normal;letter-spacing:1.148px;white-space:pre;">Dokumente</div>
<div style="position:absolute;left:78.00px;top:295.49px;font-size:19.5px;line-height:19.5px;height:25.4px;color:#bebec2;font-weight:400;font-style:normal;letter-spacing:0.926px;white-space:pre;">Dokumentenvorgabewerte</div>
<div style="position:absolute;left:78.00px;top:475.49px;font-size:19.5px;line-height:19.5px;height:25.4px;color:#bebec2;font-weight:400;font-style:normal;letter-spacing:0.979px;white-space:pre;">Dokumentenkommentare</div>
<div style="position:absolute;left:107.80px;top:331.49px;font-size:19.5px;line-height:19.5px;height:25.4px;color:#bebec2;font-weight:400;font-style:normal;letter-spacing:1.149px;white-space:pre;">Dokumentenarten</div>
<div style="position:absolute;left:107.80px;top:367.49px;font-size:19.5px;line-height:19.5px;height:25.4px;color:#bebec2;font-weight:400;font-style:normal;letter-spacing:0.900px;white-space:pre;">Dokumentkategorien</div>
<div style="position:absolute;left:107.80px;top:403.49px;font-size:19.5px;line-height:19.5px;height:25.4px;color:#bebec2;font-weight:400;font-style:normal;letter-spacing:0.697px;white-space:pre;">Herausgeber</div>
<div style="position:absolute;left:107.80px;top:511.49px;font-size:19.5px;line-height:19.5px;height:25.4px;color:#bebec2;font-weight:400;font-style:normal;letter-spacing:0.942px;white-space:pre;">offene Kommentare</div>
<div style="position:absolute;left:108.20px;top:223.49px;font-size:19.5px;line-height:19.5px;height:25.4px;color:#bebec2;font-weight:400;font-style:normal;letter-spacing:0.332px;white-space:pre;">Freigegebene</div>
<div style="position:absolute;left:238.30px;top:223.49px;font-size:19.5px;line-height:19.5px;height:25.4px;color:#bebec2;font-weight:400;font-style:normal;letter-spacing:0.960px;white-space:pre;">Dokumente</div>
<div style="position:absolute;left:107.80px;top:259.49px;font-size:19.5px;line-height:19.5px;height:25.4px;color:#bebec2;font-weight:400;font-style:normal;letter-spacing:1.148px;white-space:pre;">Dokumente</div>
<div style="position:absolute;left:221.60px;top:259.49px;font-size:19.5px;line-height:19.5px;height:25.4px;color:#bebec2;font-weight:400;font-style:normal;letter-spacing:2.522px;white-space:pre;">im</div>
<div style="position:absolute;left:251.10px;top:259.49px;font-size:19.5px;line-height:19.5px;height:25.4px;color:#bebec2;font-weight:400;font-style:normal;letter-spacing:0.519px;white-space:pre;">Freigabeprozess</div>
<div style="position:absolute;left:107.80px;top:439.49px;font-size:19.5px;line-height:19.5px;height:25.4px;color:#bebec2;font-weight:400;font-style:normal;letter-spacing:0.660px;white-space:pre;">Vorlagen und</div>
<div style="position:absolute;left:236.30px;top:439.49px;font-size:19.5px;line-height:19.5px;height:25.4px;color:#bebec2;font-weight:400;font-style:normal;letter-spacing:0.766px;white-space:pre;">Vorgabewerte</div>
<div style="position:absolute;left:107.80px;top:547.49px;font-size:19.5px;line-height:19.5px;height:25.4px;color:#bebec2;font-weight:400;font-style:normal;letter-spacing:0.798px;white-space:pre;">erledigte</div>
<div style="position:absolute;left:195.30px;top:547.49px;font-size:19.5px;line-height:19.5px;height:25.4px;color:#bebec2;font-weight:400;font-style:normal;letter-spacing:0.992px;white-space:pre;">Kommentare</div>
<div style="position:absolute;left:510.30px;top:78.68px;font-size:24px;line-height:24px;height:31.2px;color:#d6d6d8;font-weight:400;font-style:normal;letter-spacing:-0.776px;white-space:pre;">Vorlagen und Vorgabewerte</div>
<div style="position:absolute;left:623.00px;top:1626.49px;font-size:19.5px;line-height:19.5px;height:25.4px;color:#d4d4d6;font-weight:400;font-style:normal;letter-spacing:-0.338px;white-space:pre;">Seite</div>
<div style="position:absolute;left:697.00px;top:1626.49px;font-size:19.5px;line-height:19.5px;height:25.4px;color:#d4d4d6;font-weight:400;font-style:normal;letter-spacing:0.000px;white-space:pre;">1</div>
<div style="position:absolute;left:755.00px;top:1626.49px;font-size:19.5px;line-height:19.5px;height:25.4px;color:#d4d4d6;font-weight:400;font-style:normal;letter-spacing:-0.551px;white-space:pre;">von 1</div>
<div style="position:absolute;left:1956.60px;top:1625.49px;font-size:19.5px;line-height:19.5px;height:25.4px;color:#bebec2;font-weight:400;font-style:normal;letter-spacing:-0.397px;white-space:pre;">Vorlagen 1 - 10 von 10</div>
<div style="position:absolute;left:1388.30px;top:1680.22px;font-size:21px;line-height:21px;height:27.3px;color:#fbfbfb;font-weight:400;font-style:normal;letter-spacing:0.514px;white-space:pre;">Sie sind angemeldet als</div>
<div style="position:absolute;left:1627.20px;top:1680.22px;font-size:21px;line-height:21px;height:27.3px;color:#fbfbfb;font-weight:700;font-style:normal;letter-spacing:0.754px;white-space:pre;">Test Admin</div>
<div style="position:absolute;left:1813.00px;top:1680.49px;font-size:19.5px;line-height:19.5px;height:25.4px;color:#cfcfd1;font-weight:400;font-style:normal;letter-spacing:-0.031px;white-space:pre;">Logout</div>
<div style="position:absolute;left:1945.00px;top:1680.49px;font-size:19.5px;line-height:19.5px;height:25.4px;color:#cfcfd1;font-weight:400;font-style:normal;letter-spacing:0.195px;white-space:pre;">zur Mitarbeiteransicht</div>
<div style="position:absolute;left:19.50px;top:1464.61px;font-size:30px;line-height:30px;height:39.0px;color:#c5d8ee;font-weight:700;font-style:normal;letter-spacing:0.000px;white-space:pre;">§</div>
<div style="position:absolute;left:2026.50px;top:29.38px;font-size:9px;line-height:9px;height:11.7px;color:#fbfbfc;font-weight:400;font-style:normal;letter-spacing:-1.339px;white-space:pre;">XLSX</div>
<div style="position:absolute;left:2109.00px;top:11.83px;font-size:38px;line-height:38px;height:49.4px;color:#fbfbfc;font-weight:700;font-style:normal;letter-spacing:0.000px;white-space:pre;transform:scaleX(1.05);transform-origin:left;">?</div>
<div style="position:absolute;left:287px;top:90px;width:9px;height:1540px;background:linear-gradient(to right,rgba(0,0,0,0),rgba(0,0,0,0.04) 30%,rgba(0,0,0,0.27));-webkit-mask-image:linear-gradient(to bottom,transparent,#000 8px,#000 1532px,transparent)"></div>
<div style="position:absolute;left:1871px;top:90px;width:9px;height:1540px;background:linear-gradient(to left,rgba(0,0,0,0),rgba(0,0,0,0.03) 30%,rgba(0,0,0,0.200));-webkit-mask-image:linear-gradient(to bottom,transparent,#000 8px,#000 1532px,transparent)"></div>
<div style="position:absolute;left:298px;top:1628px;width:1571px;height:5px;background:linear-gradient(to bottom,rgba(0,0,0,0.200),rgba(0,0,0,0))"></div>
<div style="position:absolute;left:296px;top:88px;width:1575px;height:1540px;background:#fff;border-radius:5px 5px 4px 4px;border:1px solid #5c626c;"></div>
<div style="position:absolute;left:297px;top:89px;width:1573px;height:54.5px;background:#646b76;border-radius:4px 4px 0 0"></div>
<svg style="position:absolute;left:1836px;top:105px;" width="17" height="17" viewBox="0 0 17 17"><path d="M2.2 2.2L14.8 14.8M14.8 2.2L2.2 14.8" stroke="#f1f1f2" stroke-width="4" fill="none"/></svg>
<div style="position:absolute;left:298px;top:143.5px;width:1572px;height:60px;background:#f8f8f8"></div>
<div style="position:absolute;left:298px;top:203px;width:1572px;height:1px;background:#dedede"></div>
<div style="position:absolute;left:309px;top:156px;width:135px;height:35px;background:#e5e5e5;border:1px solid #d6d6d6;border-radius:5px"></div>
<div style="position:absolute;left:457px;top:156px;width:260px;height:35px;background:#dcdcdc;border:1px solid #cdcdcd;border-radius:5px"></div>
<svg style="position:absolute;left:314px;top:161.5px;" width="24" height="24" viewBox="0 0 24 24"><path d="M0.5 1.5Q0.5 0.5 1.5 0.5H19.5L23.5 4.5V22.5Q23.5 23.5 22.5 23.5H1.5Q0.5 23.5 0.5 22.5Z" fill="#3a72c4"/><rect x="5" y="0.5" width="12" height="8.5" fill="#e4e8f2"/><rect x="12.2" y="1.8" width="3.2" height="5.6" fill="#3a72c4"/><rect x="4" y="12" width="16" height="11.5" fill="#e8ecf5"/><path d="M4 14.6h16M4 17.6h16M4 20.6h16" stroke="#3a72c4" stroke-width="1.5"/></svg>
<svg style="position:absolute;left:462px;top:161.5px;" width="24" height="24" viewBox="0 0 24 24"><path d="M0.5 1.5Q0.5 0.5 1.5 0.5H19.5L23.5 4.5V22.5Q23.5 23.5 22.5 23.5H1.5Q0.5 23.5 0.5 22.5Z" fill="#3a72c4"/><rect x="5" y="0.5" width="12" height="8.5" fill="#e4e8f2"/><rect x="12.2" y="1.8" width="3.2" height="5.6" fill="#3a72c4"/><rect x="4" y="12" width="16" height="11.5" fill="#e8ecf5"/><path d="M4 14.6h16M4 17.6h16M4 20.6h16" stroke="#3a72c4" stroke-width="1.5"/></svg>
<div style="position:absolute;left:298px;top:204px;width:1572px;height:114px;background:#fff"></div>
<div style="position:absolute;left:298px;top:318px;width:1572px;height:1px;background:#e4e4e4"></div>
<svg style="position:absolute;left:330px;top:220.9px;" width="26" height="21" viewBox="0 0 26 21"><rect x="1.7" y="1.7" width="22.3" height="17.6" rx="2" fill="none" stroke="#c3c3c3" stroke-width="2.4"/><circle cx="8.6" cy="7.4" r="1.9" fill="#c3c3c3"/><path d="M5.6 15.5l4-5 2.6 3 2.6-3.6 4.8 5.600z" fill="#c3c3c3"/></svg>
<svg style="position:absolute;left:388.5px;top:224px;" width="24" height="16" viewBox="0 0 24 16"><rect x="1.6" y="1.7" width="14.600" height="12.600" fill="none" stroke="#c3c3c3" stroke-width="2.4" rx="0.5"/><path d="M17 7l5.600-4.500v11l-5.600-4.500z" fill="#c3c3c3"/></svg>
<svg style="position:absolute;left:444px;top:225px;" width="26" height="14" viewBox="0 0 26 14"><path d="M10.500 1.800H7.200a5.200 5.200 0 0 0 0 10.400h3.300M15.500 1.800h3.300a5.200 5.200 0 0 1 0 10.400h-3.300M8 7h10" fill="none" stroke="#c3c3c3" stroke-width="2.400"/></svg>
<svg style="position:absolute;left:501px;top:222px;" width="26" height="19" viewBox="0 0 26 19"><rect x="1.500" y="1.500" width="23" height="16" rx="2" fill="none" stroke="#c3c3c3" stroke-width="2.200"/><path d="M1.500 7h23M1.500 12h23M9.200 1.500v16M16.800 1.500v16" stroke="#c3c3c3" stroke-width="2"/></svg>
<svg style="position:absolute;left:604.5px;top:223px;" width="15.2" height="18" viewBox="0 0 15.2 18"><path d="M1.100 18L7.6 0.800L14.1 18M3.34 12.24H11.86" fill="none" stroke="#c3c3c3" stroke-width="2.3" stroke-linejoin="miter"/></svg>
<svg style="position:absolute;left:631px;top:237px;" width="12" height="6" viewBox="0 0 12 6"><path d="M0 0h12L6 6z" fill="#e3e3e3"/></svg>
<svg style="position:absolute;left:662px;top:223px;" width="15.4" height="18" viewBox="0 0 15.4 18"><path d="M1.100 18L7.7 0.800L14.3 18M3.39 12.24H12.01" fill="none" stroke="#c3c3c3" stroke-width="2.3" stroke-linejoin="miter"/></svg>
<svg style="position:absolute;left:678.6px;top:228px;" width="9.4" height="13" viewBox="0 0 9.4 13"><path d="M1.100 13L4.7 0.800L8.3 13M2.07 8.84H7.33" fill="none" stroke="#c3c3c3" stroke-width="2" stroke-linejoin="miter"/></svg>
<svg style="position:absolute;left:694px;top:237px;" width="12" height="6" viewBox="0 0 12 6"><path d="M0 0h12L6 6z" fill="#e3e3e3"/></svg>
<svg style="position:absolute;left:732px;top:223px;" width="13" height="18" viewBox="0 0 13 18"><path d="M1.100 18L6.5 0.800L11.9 18M2.86 12.24H10.14" fill="none" stroke="#c3c3c3" stroke-width="2.3" stroke-linejoin="miter"/></svg>
<svg style="position:absolute;left:739.5px;top:232px;" width="11" height="15" viewBox="0 0 11 15"><path d="M5.500 1C7.500 4.500 10 6.500 10 9.500a4.500 4.500 0 0 1-9 0C1 6.500 3.500 4.500 5.500 1z" fill="#c3c3c3" stroke="#fff" stroke-width="1"/></svg>
<svg style="position:absolute;left:786.5px;top:222px;" width="24" height="20" viewBox="0 0 24 20"><path d="M18.700 1.300L22.800 5.400 12.600 16.400 8.300 12.200z" fill="none" stroke="#c3c3c3" stroke-width="2.200" stroke-linejoin="round"/><path d="M6.700 13.600l4.300 4.300-1 1H0.300z" fill="#c3c3c3"/></svg>
<svg style="position:absolute;left:844px;top:223px;" width="17" height="18.5" viewBox="0 0 17 18.5"><path d="M8 0.400H16.500V2.700H14.500V18.500H12.200V2.700H9.900V18.500H7.600V10.800C3.500 10.800 0.600 8.800 0.600 5.600 0.600 2.400 3.500 0.400 8 0.400z" fill="#c3c3c3"/></svg>
<svg style="position:absolute;left:871px;top:237px;" width="12" height="6" viewBox="0 0 12 6"><path d="M0 0h12L6 6z" fill="#e3e3e3"/></svg>
<svg style="position:absolute;left:901.5px;top:221px;" width="28" height="22" viewBox="0 0 28 22"><path d="M4.500 1v20M1 5l3.500-4 3.500 4M1 17l3.500 4 3.500-4" fill="none" stroke="#c3c3c3" stroke-width="2"/><path d="M11 3h16M11 10.800h16M11 18.600h16" stroke="#c3c3c3" stroke-width="2.400"/></svg>
<svg style="position:absolute;left:934px;top:237.5px;" width="12" height="6" viewBox="0 0 12 6"><path d="M0 0h12L6 6z" fill="#e3e3e3"/></svg>
<svg style="position:absolute;left:1015px;top:223px;" width="18" height="18.5" viewBox="0 0 18 18.5"><path d="M0.800 17.300H6.600V15.400C4 14 2.700 11.700 2.700 8.600 2.700 4.600 5.200 2 9 2s6.300 2.600 6.300 6.600c0 3.100-1.300 5.400-3.900 6.800v1.900h5.800" fill="none" stroke="#c3c3c3" stroke-width="2.400"/></svg>
<svg style="position:absolute;left:1072px;top:230.5px;" width="18" height="3" viewBox="0 0 18 3"><rect width="18" height="2.800" fill="#c3c3c3"/></svg>
<svg style="position:absolute;left:1128.5px;top:222.8px;" width="19" height="19" viewBox="0 0 19 19"><rect x="1.200" y="1.200" width="16.600" height="16.600" fill="none" stroke="#c3c3c3" stroke-width="2.600" stroke-dasharray="2.600 2.067"/><rect x="6" y="6" width="7" height="7" fill="#c3c3c3"/><rect x="8.200" y="8.200" width="2.600" height="2.600" fill="#fff"/></svg>
<svg style="position:absolute;left:1185px;top:222px;" width="20" height="20" viewBox="0 0 20 20"><path d="M1.500 19L8.500 2.500 15.500 19M4.500 13.500h8.500" fill="none" stroke="#c3c3c3" stroke-width="2.200"/><path d="M4.500 1.500L19 18.500" stroke="#fff" stroke-width="3.600"/><path d="M5.200 1.200L19.200 18" stroke="#c3c3c3" stroke-width="1.700"/></svg>
<svg style="position:absolute;left:1284px;top:226.5px;" width="24" height="12" viewBox="0 0 24 12"><path d="M5 8C9.500 3.200 17.500 3.200 22.500 9.500" fill="none" stroke="#c3c3c3" stroke-width="2.600"/><path d="M0.300 1.800v8.500h8.500z" fill="#c3c3c3"/></svg>
<svg style="position:absolute;left:1341.5px;top:226.5px;" width="24" height="12" viewBox="0 0 24 12"><g transform="translate(24,0) scale(-1,1)"><path d="M5 8C9.500 3.200 17.500 3.200 22.500 9.500" fill="none" stroke="#c3c3c3" stroke-width="2.600"/><path d="M0.300 1.800v8.500h8.500z" fill="#c3c3c3"/></g></svg>
<svg style="position:absolute;left:1445.5px;top:223px;" width="15" height="18.5" viewBox="0 0 15 18.5"><path d="M1.700 0.200V17.900M1.700 1.400H8.200c2.700 0 4.300 1.400 4.300 3.700 0 2.100-1.500 3.500-3.900 3.700H1.700M1.700 8.800H8.900c2.800 0 4.400 1.500 4.400 3.900 0 2.500-1.700 4-4.600 4H1.700" fill="none" stroke="#c3c3c3" stroke-width="2.500" stroke-linejoin="round"/></svg>
<svg style="position:absolute;left:1506px;top:222.5px;" width="8" height="19" viewBox="0 0 8 19"><path d="M3.900 6.500L1.900 18.300" stroke="#c3c3c3" stroke-width="2.400" fill="none"/><circle cx="5.600" cy="2.300" r="1.400" fill="#c3c3c3"/></svg>
<svg style="position:absolute;left:1558px;top:223px;" width="18" height="22" viewBox="0 0 18 22"><path d="M2.500 0.400V10.500a6.300 6.300 0 0 0 12.600 0V0.400" fill="none" stroke="#c3c3c3" stroke-width="2.400"/><rect x="0.300" y="19.500" width="17.500" height="2.200" fill="#c3c3c3"/></svg>
<svg style="position:absolute;left:1612.5px;top:222.5px;" width="23" height="19" viewBox="0 0 23 19"><path d="M16.200 5.500C15.600 3.100 13.900 1.900 11.400 1.900 8.600 1.900 6.800 3.300 6.800 5.300c0 2 1.600 2.800 4.600 3.700M6.300 13.200c.5 2.500 2.400 3.900 5.200 3.900 3 0 4.900-1.400 4.900-3.500 0-1.200-.5-2-1.600-2.700" fill="none" stroke="#c3c3c3" stroke-width="2.300"/><rect x="0.300" y="9.300" width="22.400" height="2.200" fill="#c3c3c3"/></svg>
<svg style="position:absolute;left:1671px;top:225.7px;" width="13" height="13" viewBox="0 0 13 13"><path d="M1 1L11.400 11.600M11.400 1L1 11.600" stroke="#c3c3c3" stroke-width="2.600" fill="none"/></svg>
<svg style="position:absolute;left:1685.5px;top:234.2px;" width="8" height="9.5" viewBox="0 0 8 9.5"><path d="M0.900 2.800C1.300 1.500 2.300 0.900 3.600 0.900c1.500 0 2.500 0.800 2.500 2.100 0 1.100-0.600 1.900-2.400 3.200L0.900 8.300H6.600" fill="none" stroke="#c3c3c3" stroke-width="1.500"/></svg>
<svg style="position:absolute;left:1727.8px;top:225.7px;" width="13" height="13" viewBox="0 0 13 13"><path d="M1 1L11.400 11.600M11.400 1L1 11.600" stroke="#c3c3c3" stroke-width="2.600" fill="none"/></svg>
<svg style="position:absolute;left:1743.5px;top:220.8px;" width="8" height="9.5" viewBox="0 0 8 9.5"><path d="M0.900 2.800C1.300 1.500 2.300 0.900 3.600 0.900c1.500 0 2.500 0.800 2.500 2.100 0 1.100-0.600 1.900-2.400 3.200L0.900 8.300H6.600" fill="none" stroke="#c3c3c3" stroke-width="1.500"/></svg>
<svg style="position:absolute;left:328.5px;top:281px;" width="23" height="16" viewBox="0 0 23 16"><path d="M0 1.600h22.600M0 7.900h15M0 14.300h7.500" stroke="#c3c3c3" stroke-width="2.500"/></svg>
<svg style="position:absolute;left:360px;top:294.2px;" width="12" height="6" viewBox="0 0 12 6"><path d="M0 0h12L6 6z" fill="#e3e3e3"/></svg>
<svg style="position:absolute;left:393px;top:280px;" width="26" height="17" viewBox="0 0 26 17"><path d="M7.500 2.600H25M7.500 8.900H25M7.500 15.300H25" stroke="#c3c3c3" stroke-width="2.500"/><path d="M1.200 1.300H3.200V4.400M1 6.900H4.600L1.200 10.200H4.800M1 12.600H4.500V16.600H1M2.500 14.600H4.500" stroke="#c3c3c3" stroke-width="1" fill="none"/></svg>
<svg style="position:absolute;left:436px;top:294.2px;" width="12" height="6" viewBox="0 0 12 6"><path d="M0 0h12L6 6z" fill="#e3e3e3"/></svg>
<svg style="position:absolute;left:470.5px;top:280px;" width="26" height="17" viewBox="0 0 26 17"><path d="M7.200 2.600H24.500M7.200 8.900H24.500M7.200 15.300H24.500" stroke="#c3c3c3" stroke-width="2.500"/><circle cx="2.500" cy="2.600" r="1.900" fill="#c3c3c3"/><circle cx="2.500" cy="8.900" r="1.900" fill="#c3c3c3"/><circle cx="2.500" cy="15.300" r="1.900" fill="#c3c3c3"/></svg>
<svg style="position:absolute;left:513px;top:294.2px;" width="12" height="6" viewBox="0 0 12 6"><path d="M0 0h12L6 6z" fill="#e3e3e3"/></svg>
<svg style="position:absolute;left:547.5px;top:280px;" width="23" height="18" viewBox="0 0 23 18"><path d="M0 1.500H22.600M7.600 6.500H22.600M7.600 11.500H22.600M0 16.600H22.600" stroke="#c3c3c3" stroke-width="2.500"/><path d="M4.800 5v8.500L0.300 9.200z" fill="#c3c3c3"/></svg>
<svg style="position:absolute;left:604.5px;top:280px;" width="23" height="18" viewBox="0 0 23 18"><path d="M0 1.500H22.600M7.600 6.500H22.600M7.600 11.500H22.600M0 16.600H22.600" stroke="#c3c3c3" stroke-width="2.500"/><path d="M0.300 5v8.500L4.800 9.200z" fill="#c3c3c3"/></svg>
<svg style="position:absolute;left:660px;top:280.5px;" width="20" height="17.5" viewBox="0 0 20 17.5"><path d="M4.300 17C1.900 17 0.300 15.200 0.300 12.600 0.300 7.600 2.600 3.400 7 0.300L8.200 1.600C6 3.600 4.800 5.800 4.500 8.600 6.700 8.700 8.300 10.400 8.300 12.800 8.300 15.200 6.600 17 4.300 17z" fill="#c3c3c3"/><path d="M4.300 17C1.900 17 0.300 15.200 0.300 12.600 0.300 7.600 2.600 3.400 7 0.300L8.200 1.600C6 3.600 4.800 5.800 4.500 8.600 6.700 8.700 8.300 10.400 8.300 12.800 8.300 15.200 6.600 17 4.300 17z" fill="#c3c3c3" transform="translate(11,0)"/></svg>
<svg style="position:absolute;left:690px;top:294.2px;" width="12" height="6" viewBox="0 0 12 6"><path d="M0 0h12L6 6z" fill="#e3e3e3"/></svg>
<svg style="position:absolute;left:767px;top:277.5px;" width="26" height="23.5" viewBox="0 0 26 23.5"><path d="M5.200 12V1.600H15.500L20.300 6.400V12" fill="none" stroke="#c3c3c3" stroke-width="2.400"/><path d="M14.800 1.600V7H20.300z" fill="#c3c3c3"/><rect x="1.400" y="12.400" width="22.800" height="9.400" rx="1.800" fill="none" stroke="#c3c3c3" stroke-width="2.400"/><circle cx="19.500" cy="17.200" r="1.200" fill="#c3c3c3"/></svg>
<svg style="position:absolute;left:824px;top:281px;" width="26" height="16.5" viewBox="0 0 26 16.5"><path d="M9.300 1.200L2 8.100 9.300 15M16.700 1.200L24 8.100 16.700 15" fill="none" stroke="#3a8ef0" stroke-width="2.500"/></svg>
<div style="position:absolute;left:311.00px;top:106.22px;font-size:21px;line-height:21px;height:27.3px;color:#fff;font-weight:400;font-style:normal;letter-spacing:0.936px;white-space:pre;-webkit-text-stroke:0.3px #fff;">Dokumentenvorlage bearbeiten</div>
<div style="position:absolute;left:344.70px;top:166.34px;font-size:18.5px;line-height:18.5px;height:24.1px;color:#5a5a5a;font-weight:400;font-style:normal;letter-spacing:0.273px;white-space:pre;">Speichern</div>
<div style="position:absolute;left:493.00px;top:166.34px;font-size:18.5px;line-height:18.5px;height:24.1px;color:#5a5a5a;font-weight:400;font-style:normal;letter-spacing:0.312px;white-space:pre;">Speichern und schließen</div>
<div style="position:absolute;left:298px;top:319px;width:1549px;height:1264px;overflow:hidden;background:#fff">
<div style="position:absolute;left:0;top:0;width:34px;height:1264px;background:#f7f7f7;border-right:1px solid #dddddd"></div>
<div style="position:absolute;left:191.1px;top:317px;width:1178.9px;height:27px;background:#d7d4f0"></div>
<div class="cm" style="left:17.28px;top:-5.0px;font-size:18.2px;line-height:27px;letter-spacing:-0.201px;color:#999">9</div>
<div class="cm" style="left:42.00px;top:-5.0px;font-size:18.2px;line-height:27px;letter-spacing:-0.201px;color:#000"><span class="k">  </span><span class="t">&lt;body</span><span class="t">&gt;</span></div>
<div class="cm" style="left:6.56px;top:22.0px;font-size:18.2px;line-height:27px;letter-spacing:-0.201px;color:#999">10</div>
<div class="cm" style="left:6.56px;top:49.0px;font-size:18.2px;line-height:27px;letter-spacing:-0.201px;color:#999">11</div>
<div class="cm" style="left:42.00px;top:49.0px;font-size:18.2px;line-height:27px;letter-spacing:-0.201px;color:#000"><span class="k">    </span><span class="t">&lt;header</span><span class="t">&gt;</span></div>
<div class="cm" style="left:6.56px;top:76.0px;font-size:18.2px;line-height:27px;letter-spacing:-0.201px;color:#999">12</div>
<div class="cm" style="left:42.00px;top:76.0px;font-size:18.2px;line-height:27px;letter-spacing:-0.201px;color:#000"><span class="k">      </span><span class="t">&lt;table</span> <span class="a">border</span><span class="k">=</span><span class="s">&quot;0&quot;</span> <span class="a">cellpadding</span><span class="k">=</span><span class="s">&quot;3&quot;</span> <span class="a">style</span><span class="k">=</span><span class="s">&quot;border: 1px solid black; border-collapse: collapse; width: 100%;&quot;</span><span class="t">&gt;</span></div>
<div class="cm" style="left:6.56px;top:103.0px;font-size:18.2px;line-height:27px;letter-spacing:-0.201px;color:#999">13</div>
<div class="cm" style="left:42.00px;top:103.0px;font-size:18.2px;line-height:27px;letter-spacing:-0.201px;color:#000"><span class="k">        </span><span class="t">&lt;tbody</span><span class="t">&gt;</span></div>
<div class="cm" style="left:6.56px;top:130.0px;font-size:18.2px;line-height:27px;letter-spacing:-0.201px;color:#999">14</div>
<div class="cm" style="left:42.00px;top:130.0px;font-size:18.2px;line-height:27px;letter-spacing:-0.201px;color:#000"><span class="k">          </span><span class="t">&lt;tr</span><span class="t">&gt;</span></div>
<div class="cm" style="left:6.56px;top:157.0px;font-size:18.2px;line-height:27px;letter-spacing:-0.201px;color:#999">15</div>
<div class="cm" style="left:42.00px;top:157.0px;font-size:18.2px;line-height:27px;letter-spacing:-0.201px;color:#000"><span class="k">            </span><span class="t">&lt;td</span> <span class="a">style</span><span class="k">=</span><span class="s">&quot;width: 180px; text-align: center; border: 1px solid black;&quot;</span><span class="t">&gt;</span></div>
<div class="cm" style="left:6.56px;top:184.0px;font-size:18.2px;line-height:27px;letter-spacing:-0.201px;color:#999">16</div>
<div class="cm" style="left:42.00px;top:184.0px;font-size:18.2px;line-height:27px;letter-spacing:-0.201px;color:#000"><span class="k">              </span><span class="t">&lt;img</span> <span class="a">alt</span><span class="k">=</span><span class="s">&quot;Logo&quot;</span> <span class="a">id</span><span class="k">=</span><span class="s">&quot;Logo&quot;</span> <span class="a">src</span><span class="k">=</span><span class="s">&quot;/images/subportals/1/logo/small_Kopfzeile_Logo.jpg&quot;</span><span class="t">&gt;</span></div>
<div class="cm" style="left:6.56px;top:211.0px;font-size:18.2px;line-height:27px;letter-spacing:-0.201px;color:#999">17</div>
<div class="cm" style="left:42.00px;top:211.0px;font-size:18.2px;line-height:27px;letter-spacing:-0.201px;color:#000"><span class="k">            </span><span class="t">&lt;/td</span><span class="t">&gt;</span></div>
<div class="cm" style="left:6.56px;top:238.0px;font-size:18.2px;line-height:27px;letter-spacing:-0.201px;color:#999">18</div>
<div class="cm" style="left:42.00px;top:238.0px;font-size:18.2px;line-height:27px;letter-spacing:-0.201px;color:#000"><span class="k">            </span><span class="t">&lt;td</span> <span class="a">style</span><span class="k">=</span><span class="s">&quot;width: 640px; text-align: center; border: 1px solid black;&quot;</span><span class="t">&gt;</span></div>
<div class="cm" style="left:6.56px;top:265.0px;font-size:18.2px;line-height:27px;letter-spacing:-0.201px;color:#999">19</div>
<div class="cm" style="left:42.00px;top:265.0px;font-size:18.2px;line-height:27px;letter-spacing:-0.201px;color:#000"><span class="k">              </span><span class="t">&lt;span</span> <span class="a">class</span><span class="k">=</span><span class="s">&quot;placeholder&quot;</span> <span class="a">id</span><span class="k">=</span><span class="s">&quot;institution_name&quot;</span><span class="t">&gt;</span><span class="k">Einrichtung</span><span class="t">&lt;/span</span><span class="t">&gt;</span></div>
<div class="cm" style="left:6.56px;top:292.0px;font-size:18.2px;line-height:27px;letter-spacing:-0.201px;color:#999">20</div>
<div class="cm" style="left:42.00px;top:292.0px;font-size:18.2px;line-height:27px;letter-spacing:-0.201px;color:#000"><span class="k">              </span><span class="t">&lt;br</span><span class="t">&gt;</span></div>
<div class="cm" style="left:6.56px;top:319.0px;font-size:18.2px;line-height:27px;letter-spacing:-0.201px;color:#999">21</div>
<div class="cm" style="left:42.00px;top:319.0px;font-size:18.2px;line-height:27px;letter-spacing:-0.201px;color:#000"><span class="k">              </span><span class="t">&lt;span</span> <span class="a">class</span><span class="k">=</span><span class="s">&quot;placeholder&quot;</span> <span class="a">id</span><span class="k">=</span><span class="s">&quot;document_title&quot;</span> <span class="a">style</span><span class="k">=</span><span class="s">&quot;font-size:16px; font-weight:bold;&quot;</span><span class="t">&gt;</span><span class="k">Dokumententitel</span><span class="t">&lt;/span</span><span class="t">&gt;</span></div>
<div class="cm" style="left:6.56px;top:346.0px;font-size:18.2px;line-height:27px;letter-spacing:-0.201px;color:#999">22</div>
<div class="cm" style="left:42.00px;top:346.0px;font-size:18.2px;line-height:27px;letter-spacing:-0.201px;color:#000"><span class="k">            </span><span class="t">&lt;/td</span><span class="t">&gt;</span></div>
<div class="cm" style="left:6.56px;top:373.0px;font-size:18.2px;line-height:27px;letter-spacing:-0.201px;color:#999">23</div>
<div class="cm" style="left:42.00px;top:373.0px;font-size:18.2px;line-height:27px;letter-spacing:-0.201px;color:#000"><span class="k">            </span><span class="t">&lt;td</span> <span class="a">style</span><span class="k">=</span><span class="s">&quot;width: 180px; vertical-align: middle; border: 1px solid black;&quot;</span><span class="t">&gt;</span></div>
<div class="cm" style="left:6.56px;top:400.0px;font-size:18.2px;line-height:27px;letter-spacing:-0.201px;color:#999">24</div>
<div class="cm" style="left:42.00px;top:400.0px;font-size:18.2px;line-height:27px;letter-spacing:-0.201px;color:#000"><span class="k">              Revision: </span><span class="t">&lt;span</span> <span class="a">class</span><span class="k">=</span><span class="s">&quot;placeholder&quot;</span> <span class="a">id</span><span class="k">=</span><span class="s">&quot;revision_number&quot;</span><span class="t">&gt;</span><span class="k">xx</span><span class="t">&lt;/span</span><span class="t">&gt;</span></div>
<div class="cm" style="left:6.56px;top:427.0px;font-size:18.2px;line-height:27px;letter-spacing:-0.201px;color:#999">25</div>
<div class="cm" style="left:42.00px;top:427.0px;font-size:18.2px;line-height:27px;letter-spacing:-0.201px;color:#000"><span class="k">              </span><span class="t">&lt;br</span><span class="t">&gt;</span></div>
<div class="cm" style="left:6.56px;top:454.0px;font-size:18.2px;line-height:27px;letter-spacing:-0.201px;color:#999">26</div>
<div class="cm" style="left:42.00px;top:454.0px;font-size:18.2px;line-height:27px;letter-spacing:-0.201px;color:#000"><span class="k">              </span><span class="t">&lt;span</span> <span class="a">class</span><span class="k">=</span><span class="s">&quot;placeholder&quot;</span> <span class="a">id</span><span class="k">=</span><span class="s">&quot;document_description&quot;</span><span class="t">&gt;</span><span class="k">Dokumentenart</span><span class="t">&lt;/span</span><span class="t">&gt;</span></div>
<div class="cm" style="left:6.56px;top:481.0px;font-size:18.2px;line-height:27px;letter-spacing:-0.201px;color:#999">27</div>
<div class="cm" style="left:42.00px;top:481.0px;font-size:18.2px;line-height:27px;letter-spacing:-0.201px;color:#000"><span class="k">              </span><span class="t">&lt;br</span><span class="t">&gt;</span></div>
<div class="cm" style="left:6.56px;top:508.0px;font-size:18.2px;line-height:27px;letter-spacing:-0.201px;color:#999">28</div>
<div class="cm" style="left:42.00px;top:508.0px;font-size:18.2px;line-height:27px;letter-spacing:-0.201px;color:#000"><span class="k">              </span><span class="t">&lt;span</span> <span class="a">class</span><span class="k">=</span><span class="s">&quot;placeholder&quot;</span> <span class="a">id</span><span class="k">=</span><span class="s">&quot;release_date1&quot;</span><span class="t">&gt;</span><span class="k">Freigabedatum</span><span class="t">&lt;/span</span><span class="t">&gt;</span></div>
<div class="cm" style="left:6.56px;top:535.0px;font-size:18.2px;line-height:27px;letter-spacing:-0.201px;color:#999">29</div>
<div class="cm" style="left:42.00px;top:535.0px;font-size:18.2px;line-height:27px;letter-spacing:-0.201px;color:#000"><span class="k">              </span><span class="t">&lt;br</span><span class="t">&gt;</span></div>
<div class="cm" style="left:6.56px;top:562.0px;font-size:18.2px;line-height:27px;letter-spacing:-0.201px;color:#999">30</div>
<div class="cm" style="left:42.00px;top:562.0px;font-size:18.2px;line-height:27px;letter-spacing:-0.201px;color:#000"><span class="k">              </span><span class="t">&lt;span</span> <span class="a">class</span><span class="k">=</span><span class="s">&quot;placeholder&quot;</span> <span class="a">id</span><span class="k">=</span><span class="s">&quot;revision_number&quot;</span><span class="t">&gt;</span><span class="k">Revisionsnummer</span><span class="t">&lt;/span</span><span class="t">&gt;</span></div>
<div class="cm" style="left:6.56px;top:589.0px;font-size:18.2px;line-height:27px;letter-spacing:-0.201px;color:#999">31</div>
<div class="cm" style="left:42.00px;top:589.0px;font-size:18.2px;line-height:27px;letter-spacing:-0.201px;color:#000"><span class="k">            </span><span class="t">&lt;/td</span><span class="t">&gt;</span></div>
<div class="cm" style="left:6.56px;top:616.0px;font-size:18.2px;line-height:27px;letter-spacing:-0.201px;color:#999">32</div>
<div class="cm" style="left:42.00px;top:616.0px;font-size:18.2px;line-height:27px;letter-spacing:-0.201px;color:#000"><span class="k">          </span><span class="t">&lt;/tr</span><span class="t">&gt;</span></div>
<div class="cm" style="left:6.56px;top:643.0px;font-size:18.2px;line-height:27px;letter-spacing:-0.201px;color:#999">33</div>
<div class="cm" style="left:42.00px;top:643.0px;font-size:18.2px;line-height:27px;letter-spacing:-0.201px;color:#000"><span class="k">        </span><span class="t">&lt;/tbody</span><span class="t">&gt;</span></div>
<div class="cm" style="left:6.56px;top:670.0px;font-size:18.2px;line-height:27px;letter-spacing:-0.201px;color:#999">34</div>
<div class="cm" style="left:42.00px;top:670.0px;font-size:18.2px;line-height:27px;letter-spacing:-0.201px;color:#000"><span class="k">      </span><span class="t">&lt;/table</span><span class="t">&gt;</span></div>
<div class="cm" style="left:6.56px;top:697.0px;font-size:18.2px;line-height:27px;letter-spacing:-0.201px;color:#999">35</div>
<div class="cm" style="left:42.00px;top:697.0px;font-size:18.2px;line-height:27px;letter-spacing:-0.201px;color:#000"><span class="k">    </span><span class="t">&lt;/header</span><span class="t">&gt;</span></div>
<div class="cm" style="left:6.56px;top:724.0px;font-size:18.2px;line-height:27px;letter-spacing:-0.201px;color:#999">36</div>
<div class="cm" style="left:6.56px;top:751.0px;font-size:18.2px;line-height:27px;letter-spacing:-0.201px;color:#999">37</div>
<div class="cm" style="left:42.00px;top:751.0px;font-size:18.2px;line-height:27px;letter-spacing:-0.201px;color:#000"><span class="k">    </span><span class="t">&lt;p</span><span class="t">&gt;</span><span class="k">Hier Ihren Text einf</span><span class="e">&amp;uuml;</span><span class="k">gen...</span><span class="t">&lt;/p</span><span class="t">&gt;</span></div>
<div class="cm" style="left:6.56px;top:778.0px;font-size:18.2px;line-height:27px;letter-spacing:-0.201px;color:#999">38</div>
<div class="cm" style="left:6.56px;top:805.0px;font-size:18.2px;line-height:27px;letter-spacing:-0.201px;color:#999">39</div>
<div class="cm" style="left:42.00px;top:805.0px;font-size:18.2px;line-height:27px;letter-spacing:-0.201px;color:#000"><span class="k">    </span><span class="t">&lt;footer</span><span class="t">&gt;</span></div>
<div class="cm" style="left:6.56px;top:832.0px;font-size:18.2px;line-height:27px;letter-spacing:-0.201px;color:#999">40</div>
<div class="cm" style="left:42.00px;top:832.0px;font-size:18.2px;line-height:27px;letter-spacing:-0.201px;color:#000"><span class="k">      </span><span class="t">&lt;table</span> <span class="a">border</span><span class="k">=</span><span class="s">&quot;0&quot;</span> <span class="a">cellpadding</span><span class="k">=</span><span class="s">&quot;3&quot;</span> <span class="a">style</span><span class="k">=</span><span class="s">&quot;border: 1px solid black; border-collapse: collapse; width: 100%;&quot;</span><span class="t">&gt;</span></div>
<div class="cm" style="left:6.56px;top:859.0px;font-size:18.2px;line-height:27px;letter-spacing:-0.201px;color:#999">41</div>
<div class="cm" style="left:42.00px;top:859.0px;font-size:18.2px;line-height:27px;letter-spacing:-0.201px;color:#000"><span class="k">        </span><span class="t">&lt;tbody</span><span class="t">&gt;</span></div>
<div class="cm" style="left:6.56px;top:886.0px;font-size:18.2px;line-height:27px;letter-spacing:-0.201px;color:#999">42</div>
<div class="cm" style="left:42.00px;top:886.0px;font-size:18.2px;line-height:27px;letter-spacing:-0.201px;color:#000"><span class="k">          </span><span class="t">&lt;tr</span><span class="t">&gt;</span></div>
<div class="cm" style="left:6.56px;top:913.0px;font-size:18.2px;line-height:27px;letter-spacing:-0.201px;color:#999">43</div>
<div class="cm" style="left:42.00px;top:913.0px;font-size:18.2px;line-height:27px;letter-spacing:-0.201px;color:#000"><span class="k">            </span><span class="t">&lt;td</span> <span class="a">style</span><span class="k">=</span><span class="s">&quot;width: 33%; border: 1px solid black;&quot;</span><span class="t">&gt;</span><span class="k">Erstellt durch: </span><span class="t">&lt;span</span> <span class="a">class</span><span class="k">=</span><span class="s">&quot;placeholder&quot;</span> <span class="a">id</span><span class="k">=</span><span class="s">&quot;authors&quot;</span><span class="t">&gt;</span><span class="k">Autor</span><span class="t">&lt;/span</span><span class="t">&gt;</span></div>
<div class="cm" style="left:6.56px;top:940.0px;font-size:18.2px;line-height:27px;letter-spacing:-0.201px;color:#999">44</div>
<div class="cm" style="left:42.00px;top:940.0px;font-size:18.2px;line-height:27px;letter-spacing:-0.201px;color:#000"><span class="k">              </span><span class="t">&lt;br</span><span class="t">&gt;</span><span class="k"> am: </span><span class="t">&lt;span</span> <span class="a">class</span><span class="k">=</span><span class="s">&quot;placeholder&quot;</span> <span class="a">id</span><span class="k">=</span><span class="s">&quot;creation_date&quot;</span><span class="t">&gt;</span><span class="k">Erstelldatum</span><span class="t">&lt;/span</span><span class="t">&gt;</span><span class="t">&lt;/td</span><span class="t">&gt;</span></div>
<div class="cm" style="left:6.56px;top:967.0px;font-size:18.2px;line-height:27px;letter-spacing:-0.201px;color:#999">45</div>
<div class="cm" style="left:42.00px;top:967.0px;font-size:18.2px;line-height:27px;letter-spacing:-0.201px;color:#000"><span class="k">            </span><span class="t">&lt;td</span> <span class="a">style</span><span class="k">=</span><span class="s">&quot;width: 33%; border: 1px solid black;&quot;</span><span class="t">&gt;</span><span class="t">&lt;/td</span><span class="t">&gt;</span></div>
<div class="cm" style="left:6.56px;top:994.0px;font-size:18.2px;line-height:27px;letter-spacing:-0.201px;color:#999">46</div>
<div class="cm" style="left:42.00px;top:994.0px;font-size:18.2px;line-height:27px;letter-spacing:-0.201px;color:#000"><span class="k">            </span><span class="t">&lt;td</span> <span class="a">style</span><span class="k">=</span><span class="s">&quot;width: 33%; border: 1px solid black;&quot;</span><span class="t">&gt;</span><span class="t">&lt;/td</span><span class="t">&gt;</span></div>
<div class="cm" style="left:6.56px;top:1021.0px;font-size:18.2px;line-height:27px;letter-spacing:-0.201px;color:#999">47</div>
<div class="cm" style="left:42.00px;top:1021.0px;font-size:18.2px;line-height:27px;letter-spacing:-0.201px;color:#000"><span class="k">          </span><span class="t">&lt;/tr</span><span class="t">&gt;</span></div>
<div class="cm" style="left:6.56px;top:1048.0px;font-size:18.2px;line-height:27px;letter-spacing:-0.201px;color:#999">48</div>
<div class="cm" style="left:42.00px;top:1048.0px;font-size:18.2px;line-height:27px;letter-spacing:-0.201px;color:#000"><span class="k">        </span><span class="t">&lt;/tbody</span><span class="t">&gt;</span></div>
<div class="cm" style="left:6.56px;top:1075.0px;font-size:18.2px;line-height:27px;letter-spacing:-0.201px;color:#999">49</div>
<div class="cm" style="left:42.00px;top:1075.0px;font-size:18.2px;line-height:27px;letter-spacing:-0.201px;color:#000"><span class="k">      </span><span class="t">&lt;/table</span><span class="t">&gt;</span></div>
<div class="cm" style="left:6.56px;top:1102.0px;font-size:18.2px;line-height:27px;letter-spacing:-0.201px;color:#999">50</div>
<div class="cm" style="left:42.00px;top:1102.0px;font-size:18.2px;line-height:27px;letter-spacing:-0.201px;color:#000"><span class="k">    </span><span class="t">&lt;/footer</span><span class="t">&gt;</span></div>
<div class="cm" style="left:6.56px;top:1129.0px;font-size:18.2px;line-height:27px;letter-spacing:-0.201px;color:#999">51</div>
<div class="cm" style="left:42.00px;top:1129.0px;font-size:18.2px;line-height:27px;letter-spacing:-0.201px;color:#000"><span class="k">  </span><span class="t">&lt;/body</span><span class="t">&gt;</span></div>
<div class="cm" style="left:6.56px;top:1156.0px;font-size:18.2px;line-height:27px;letter-spacing:-0.201px;color:#999">52</div>
<div class="cm" style="left:42.00px;top:1156.0px;font-size:18.2px;line-height:27px;letter-spacing:-0.201px;color:#000"><span class="t">&lt;/html</span><span class="t">&gt;</span></div>
<div class="cm" style="left:6.56px;top:1183.0px;font-size:18.2px;line-height:27px;letter-spacing:-0.201px;color:#999">53</div>
</div>
<div style="position:absolute;left:1847px;top:319px;width:23px;height:1264px;background:#f1f1f1"></div>
<div style="position:absolute;left:1848.5px;top:531.5px;width:21.5px;height:1051.5px;background:#c1c1c1"></div>
<div style="position:absolute;left:298px;top:1583px;width:1572px;height:23px;background:#f1f1f1"></div>
<svg style="position:absolute;left:1854px;top:328.5px;" width="11" height="6.5" viewBox="0 0 12 8"><path d="M0 7.5h12L6 0.5z" fill="#505050"/></svg>
<svg style="position:absolute;left:1853px;top:1591px;" width="12" height="8" viewBox="0 0 12 8"><path d="M0 0.5h12L6 7.5z" fill="#a3a3a3"/></svg>
<svg style="position:absolute;left:305px;top:1589px;" width="8" height="12" viewBox="0 0 8 12"><path d="M7.5 0v12L0.5 6z" fill="#a3a3a3"/></svg>
<div style="position:absolute;left:368px;top:355px;width:1365px;height:698px;border:3px solid #0f9d8e"></div>
<div style="position:absolute;left:466px;top:473px;width:936px;height:82px;border:3px solid #0f9d8e"></div>
<div style="position:absolute;left:466px;top:556px;width:1217px;height:136px;border:3px solid #0f9d8e"></div>
<div style="position:absolute;left:468px;top:693px;width:833px;height:244px;border:3px solid #0f9d8e"></div>
<div style="position:absolute;left:471.6px;top:364px;width:225.5px;height:28px;background:#0f9d8e"></div>
<div style="position:absolute;left:1551.8px;top:394px;width:210.4000000000001px;height:28px;background:#0f9d8e"></div>
<div style="position:absolute;left:490.6px;top:448px;width:285.29999999999995px;height:26px;background:#0f9d8e"></div>
<div style="position:absolute;left:1392.6px;top:496px;width:97.60000000000014px;height:27px;background:#0f9d8e"></div>
<div style="position:absolute;left:1668.7px;top:595.6px;width:97.59999999999991px;height:27.100000000000023px;background:#0f9d8e"></div>
<div style="position:absolute;left:1293px;top:802px;width:117.20000000000005px;height:28px;background:#0f9d8e"></div>
<div style="position:absolute;left:500.8px;top:936px;width:285.3px;height:27px;background:#0f9d8e"></div>
<div style="position:absolute;left:488px;top:986.7px;width:207.10000000000002px;height:28.299999999999955px;background:#0f9d8e"></div>
<div style="position:absolute;left:486.7px;top:1018px;width:208.40000000000003px;height:28px;background:#0f9d8e"></div>
<div style="position:absolute;left:481.40px;top:366.53px;font-size:23px;line-height:23px;height:29.9px;color:#fff;font-weight:700;font-style:normal;letter-spacing:0.977px;white-space:pre;">Kopfzeile beginnt</div>
<div style="position:absolute;left:1564.50px;top:396.53px;font-size:23px;line-height:23px;height:29.9px;color:#fff;font-weight:700;font-style:normal;letter-spacing:1.301px;white-space:pre;">Tabelle beginnt</div>
<div style="position:absolute;left:506.30px;top:450.53px;font-size:23px;line-height:23px;height:29.9px;color:#fff;font-weight:700;font-style:normal;letter-spacing:1.165px;white-space:pre;">Tabellenzeile beginnt</div>
<div style="position:absolute;left:1402.20px;top:497.53px;font-size:23px;line-height:23px;height:29.9px;color:#fff;font-weight:700;font-style:normal;letter-spacing:0.532px;white-space:pre;">Zelle 1</div>
<div style="position:absolute;left:1678.30px;top:597.53px;font-size:23px;line-height:23px;height:29.9px;color:#fff;font-weight:700;font-style:normal;letter-spacing:0.832px;white-space:pre;">Zelle 2</div>
<div style="position:absolute;left:1312.00px;top:803.53px;font-size:23px;line-height:23px;height:29.9px;color:#fff;font-weight:700;font-style:normal;letter-spacing:0.932px;white-space:pre;">Zelle 3</div>
<div style="position:absolute;left:526.80px;top:937.53px;font-size:23px;line-height:23px;height:29.9px;color:#fff;font-weight:700;font-style:normal;letter-spacing:1.250px;white-space:pre;">Tabellenzeile endet</div>
<div style="position:absolute;left:514.10px;top:989.53px;font-size:23px;line-height:23px;height:29.9px;color:#fff;font-weight:700;font-style:normal;letter-spacing:1.428px;white-space:pre;">Tabele endet</div>
<div style="position:absolute;left:499.40px;top:1020.53px;font-size:23px;line-height:23px;height:29.9px;color:#fff;font-weight:700;font-style:normal;letter-spacing:1.017px;white-space:pre;">Kopfzeile endet</div>
<div style="position:absolute;left:816px;top:262px;width:43px;height:49.69999999999999px;border:3px solid #0f9d8e"></div>
<svg style="position:absolute;left:1640px;top:656.5px;" width="27" height="33" viewBox="0 0 27 33"><path d="M9.800 20V2.700C9.800 0.200 13.700 0.200 13.700 2.700V9.700C13.700 8.300 17.800 8.300 17.800 10.200C17.800 9 21.600 9.200 21.600 11C21.600 10 25.900 10.400 25.900 12.800V20.500C25.900 27.500 21.500 31.700 16.500 31.700C12.500 31.700 10 29 7 25L1.700 18.800C0.500 17 3 15.300 4.700 16.800L9.800 21.500Z" fill="#fff" stroke="#1d1d2b" stroke-width="1.250" stroke-linejoin="round"/><path d="M13.700 9.700V15.200M17.800 10.200V15.200M21.600 11V15.600" stroke="#1d1d2b" stroke-width="1.150" fill="none"/></svg>
</body></html>
